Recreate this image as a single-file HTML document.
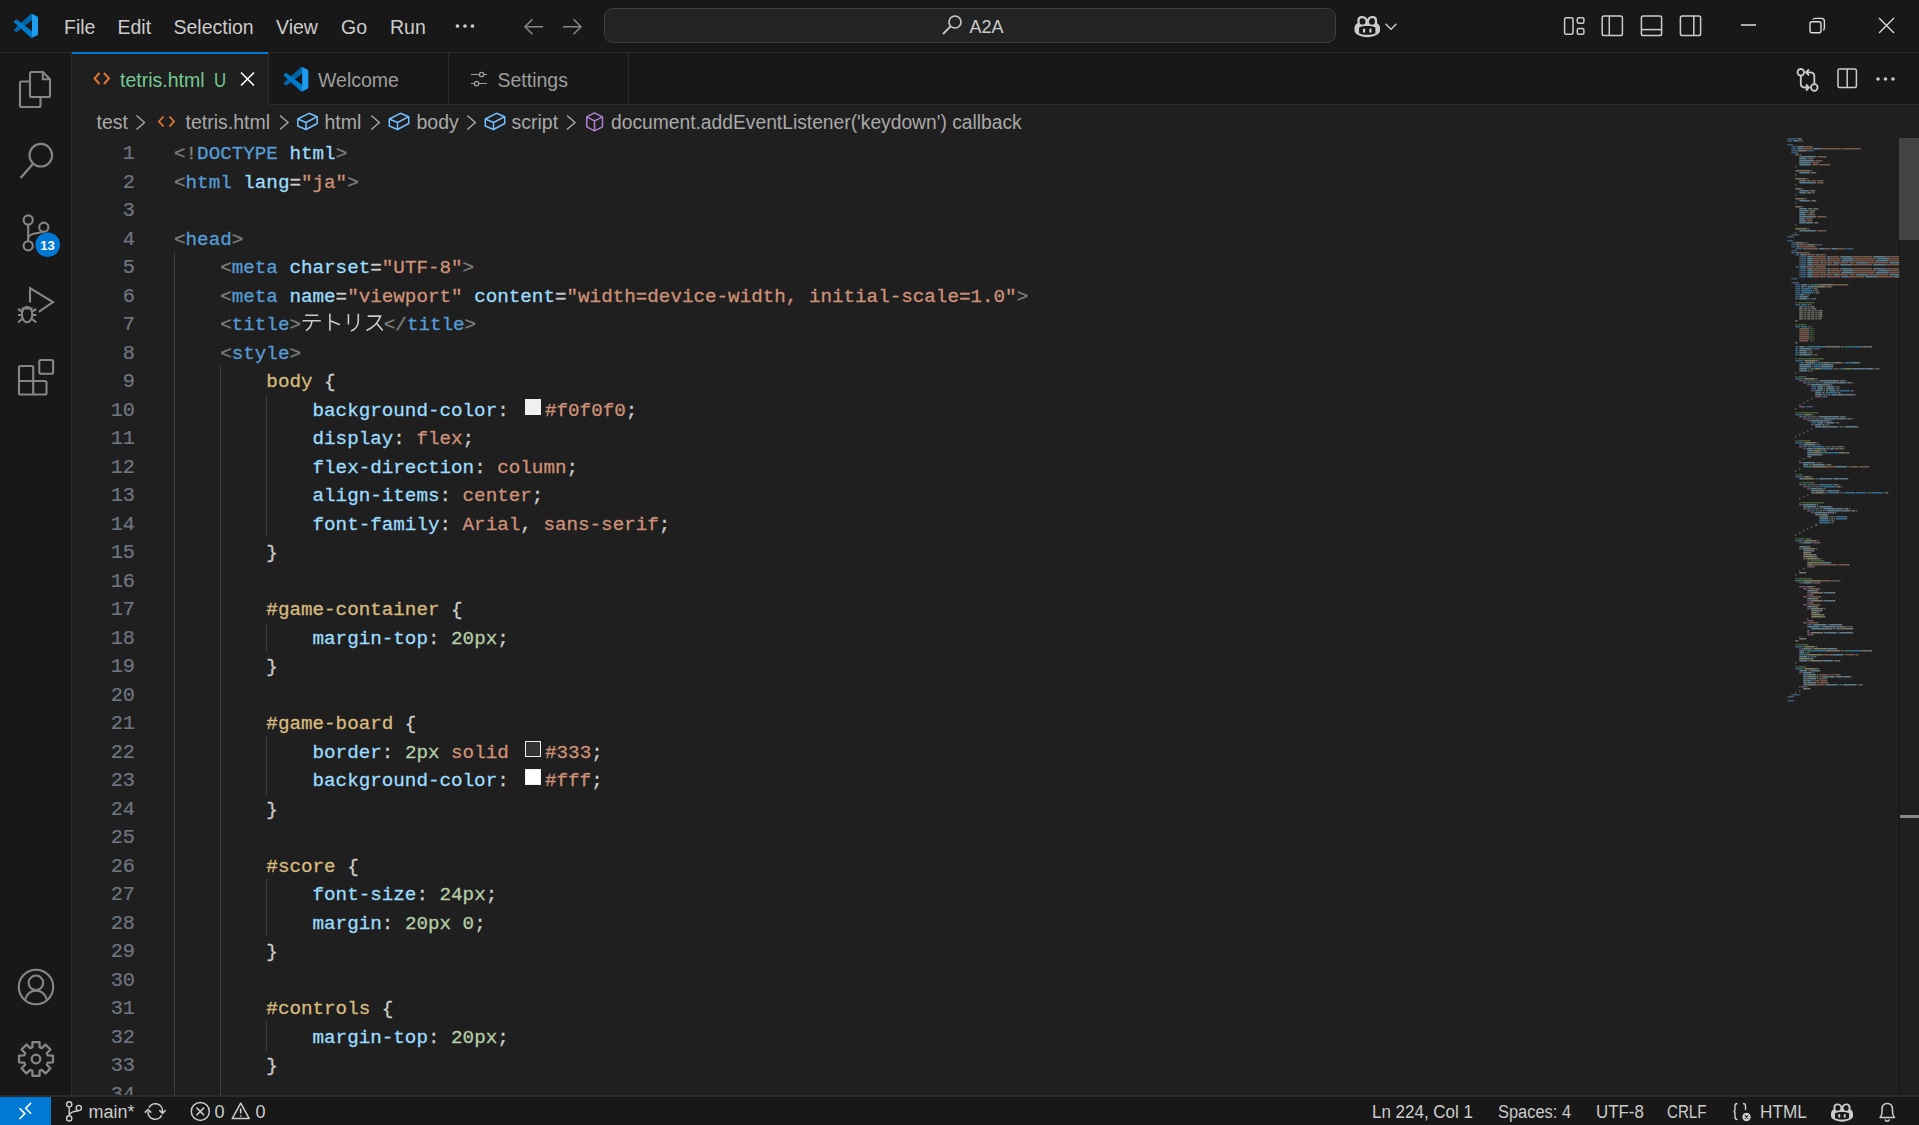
<!DOCTYPE html>
<html><head><meta charset="utf-8"><style>
html,body{margin:0;padding:0;width:1919px;height:1125px;overflow:hidden;background:#181818}
.r{position:absolute}
.t{position:absolute;white-space:pre;line-height:1;font-family:"Liberation Sans", sans-serif}
.ln{position:absolute;left:0;width:63px;text-align:right;font-family:"Liberation Mono", monospace;font-size:20.3px;line-height:1;margin-top:-0.8px;color:#6e7681;-webkit-text-stroke:0.2px currentColor}
.code{position:absolute;white-space:pre;font-family:"Liberation Mono", monospace;font-size:19.24px;line-height:1;color:#cccccc;-webkit-text-stroke:0.3px currentColor}
.jp{display:inline-block;width:82.8px;height:1px}
.sw{display:inline-block;box-sizing:border-box;width:16.2px;height:16.2px;margin:0 4.2px 0 4.3px;border:1.6px solid #eeeeee;vertical-align:top;position:relative;top:-2.9px}
</style></head><body>
<div class="r" style="left:0px;top:0px;width:1919px;height:1125px;background:#181818;"></div><div class="r" style="left:72px;top:104px;width:1847px;height:991px;background:#1f1f1f;"></div><div class="r" style="left:0px;top:52px;width:1919px;height:1px;background:#2b2b2b;"></div><div class="r" style="left:71px;top:53px;width:1px;height:1042px;background:#2b2b2b;"></div><div class="r" style="left:72px;top:104px;width:1847px;height:1px;background:#2b2b2b;"></div><div class="r" style="left:72px;top:53px;width:196px;height:52px;background:#1f1f1f;"></div><div class="r" style="left:72px;top:52px;width:196px;height:2px;background:#0078d4;"></div><div class="r" style="left:268px;top:53px;width:1px;height:51px;background:#2b2b2b;"></div><div class="r" style="left:448px;top:53px;width:1px;height:51px;background:#2b2b2b;"></div><div class="r" style="left:628px;top:53px;width:1px;height:51px;background:#2b2b2b;"></div><div class="r" style="left:0px;top:1095px;width:1919px;height:2px;background:#2b2b2b;"></div><div class="r" style="left:0px;top:1097px;width:51px;height:28px;background:#0078d4;"></div><div class="t" style="left:64.00px;top:17.69px;font-size:19.5px;color:#cccccc;">File</div><div class="t" style="left:117.50px;top:17.69px;font-size:19.5px;color:#cccccc;">Edit</div><div class="t" style="left:173.50px;top:17.69px;font-size:19.5px;color:#cccccc;">Selection</div><div class="t" style="left:276.00px;top:17.69px;font-size:19.5px;color:#cccccc;">View</div><div class="t" style="left:341.00px;top:17.69px;font-size:19.5px;color:#cccccc;">Go</div><div class="t" style="left:390.00px;top:17.69px;font-size:19.5px;color:#cccccc;">Run</div><div class="r" style="left:604px;top:8px;width:730px;height:33px;background:#232323;border:1px solid #3e3e3e;border-radius:9px"></div><div class="t" style="left:969.50px;top:17.96px;font-size:18px;color:#cccccc;">A2A</div><div class="t" style="left:120.00px;top:71.39px;font-size:19.5px;color:#73c991;">tetris.html</div><div class="t" style="left:214.00px;top:71.39px;font-size:19.5px;color:#73c991;transform:scaleX(0.86);transform-origin:0 0;">U</div><div class="t" style="left:318.00px;top:71.39px;font-size:19.5px;color:#9d9d9d;">Welcome</div><div class="t" style="left:497.50px;top:71.39px;font-size:19.5px;color:#9d9d9d;">Settings</div><div class="t" style="left:96.50px;top:113.39px;font-size:19.5px;color:#a9a9a9;">test</div><div class="t" style="left:185.50px;top:113.39px;font-size:19.5px;color:#a9a9a9;">tetris.html</div><div class="t" style="left:324.50px;top:113.39px;font-size:19.5px;color:#a9a9a9;">html</div><div class="t" style="left:416.50px;top:113.39px;font-size:19.5px;color:#a9a9a9;">body</div><div class="t" style="left:511.50px;top:113.39px;font-size:19.5px;color:#a9a9a9;">script</div><div class="t" style="left:611.00px;top:113.39px;font-size:19.5px;color:#a9a9a9;transform:scaleX(0.987);transform-origin:0 0;">document.addEventListener('keydown') callback</div><div class="t" style="left:88.50px;top:1103.36px;font-size:18px;color:#cccccc;">main*</div><div class="t" style="left:214.50px;top:1103.36px;font-size:18px;color:#cccccc;">0</div><div class="t" style="left:255.50px;top:1103.36px;font-size:18px;color:#cccccc;">0</div><div class="t" style="left:1372.00px;top:1103.36px;font-size:18px;color:#cccccc;transform:scaleX(0.943);transform-origin:0 0;">Ln 224, Col 1</div><div class="t" style="left:1497.50px;top:1103.36px;font-size:18px;color:#cccccc;transform:scaleX(0.9125);transform-origin:0 0;">Spaces: 4</div><div class="t" style="left:1595.50px;top:1103.36px;font-size:18px;color:#cccccc;transform:scaleX(0.938);transform-origin:0 0;">UTF-8</div><div class="t" style="left:1666.50px;top:1103.36px;font-size:18px;color:#cccccc;transform:scaleX(0.839);transform-origin:0 0;">CRLF</div><div class="t" style="left:1760.00px;top:1103.36px;font-size:18px;color:#cccccc;transform:scaleX(0.954);transform-origin:0 0;">HTML</div><div class="r" style="left:1899px;top:138px;width:1px;height:957px;background:#131313;"></div><div class="r" style="left:1899px;top:138px;width:20px;height:102px;background:#434343;"></div><div class="r" style="left:1900px;top:815px;width:19px;height:3px;background:#8a8a8a;"></div><div style="position:absolute;left:72px;top:138px;width:1716px;height:957px;overflow:hidden"><div class="ln" style="top:7.15px">1</div><div class="code" style="top:7.15px;left:102.0px"><span style="color:#808080">&lt;!</span><span style="color:#569cd6">DOCTYPE</span><span style="color:#cccccc"> </span><span style="color:#9cdcfe">html</span><span style="color:#808080">&gt;</span></div><div class="ln" style="top:35.65px">2</div><div class="code" style="top:35.65px;left:102.0px"><span style="color:#808080">&lt;</span><span style="color:#569cd6">html</span> <span style="color:#9cdcfe">lang</span><span style="color:#cccccc">=</span><span style="color:#ce9178">&quot;ja&quot;</span><span style="color:#808080">&gt;</span></div><div class="ln" style="top:64.15px">3</div><div class="code" style="top:64.15px;left:102.0px"></div><div class="ln" style="top:92.65px">4</div><div class="code" style="top:92.65px;left:102.0px"><span style="color:#808080">&lt;</span><span style="color:#569cd6">head</span><span style="color:#808080">&gt;</span></div><div class="ln" style="top:121.15px">5</div><div class="r" style="left:102.0px;top:114.00px;width:1px;height:28.7px;background:#404040"></div><div class="code" style="top:121.15px;left:102.0px">    <span style="color:#808080">&lt;</span><span style="color:#569cd6">meta</span> <span style="color:#9cdcfe">charset</span><span style="color:#cccccc">=</span><span style="color:#ce9178">&quot;UTF-8&quot;</span><span style="color:#808080">&gt;</span></div><div class="ln" style="top:149.65px">6</div><div class="r" style="left:102.0px;top:142.50px;width:1px;height:28.7px;background:#404040"></div><div class="code" style="top:149.65px;left:102.0px">    <span style="color:#808080">&lt;</span><span style="color:#569cd6">meta</span> <span style="color:#9cdcfe">name</span><span style="color:#cccccc">=</span><span style="color:#ce9178">&quot;viewport&quot;</span> <span style="color:#9cdcfe">content</span><span style="color:#cccccc">=</span><span style="color:#ce9178">&quot;width=device-width, initial-scale=1.0&quot;</span><span style="color:#808080">&gt;</span></div><div class="ln" style="top:178.15px">7</div><div class="r" style="left:102.0px;top:171.00px;width:1px;height:28.7px;background:#404040"></div><div class="code" style="top:178.15px;left:102.0px">    <span style="color:#808080">&lt;</span><span style="color:#569cd6">title</span><span style="color:#808080">&gt;</span><span class="jp"></span><span style="color:#808080">&lt;/</span><span style="color:#569cd6">title</span><span style="color:#808080">&gt;</span></div><div class="ln" style="top:206.65px">8</div><div class="r" style="left:102.0px;top:199.50px;width:1px;height:28.7px;background:#404040"></div><div class="code" style="top:206.65px;left:102.0px">    <span style="color:#808080">&lt;</span><span style="color:#569cd6">style</span><span style="color:#808080">&gt;</span></div><div class="ln" style="top:235.15px">9</div><div class="r" style="left:102.0px;top:228.00px;width:1px;height:28.7px;background:#404040"></div><div class="r" style="left:148.2px;top:228.00px;width:1px;height:28.7px;background:#404040"></div><div class="code" style="top:235.15px;left:102.0px">        <span style="color:#d7ba7d">body</span><span style="color:#cccccc"> {</span></div><div class="ln" style="top:263.65px">10</div><div class="r" style="left:102.0px;top:256.50px;width:1px;height:28.7px;background:#404040"></div><div class="r" style="left:148.2px;top:256.50px;width:1px;height:28.7px;background:#404040"></div><div class="r" style="left:194.4px;top:256.50px;width:1px;height:28.7px;background:#404040"></div><div class="code" style="top:263.65px;left:102.0px">            <span style="color:#9cdcfe">background-color</span><span style="color:#cccccc">: </span><span class="sw" style="background:#f0f0f0"></span><span style="color:#ce9178">#f0f0f0</span><span style="color:#cccccc">;</span></div><div class="ln" style="top:292.15px">11</div><div class="r" style="left:102.0px;top:285.00px;width:1px;height:28.7px;background:#404040"></div><div class="r" style="left:148.2px;top:285.00px;width:1px;height:28.7px;background:#404040"></div><div class="r" style="left:194.4px;top:285.00px;width:1px;height:28.7px;background:#404040"></div><div class="code" style="top:292.15px;left:102.0px">            <span style="color:#9cdcfe">display</span><span style="color:#cccccc">: </span><span style="color:#ce9178">flex</span><span style="color:#cccccc">;</span></div><div class="ln" style="top:320.65px">12</div><div class="r" style="left:102.0px;top:313.50px;width:1px;height:28.7px;background:#404040"></div><div class="r" style="left:148.2px;top:313.50px;width:1px;height:28.7px;background:#404040"></div><div class="r" style="left:194.4px;top:313.50px;width:1px;height:28.7px;background:#404040"></div><div class="code" style="top:320.65px;left:102.0px">            <span style="color:#9cdcfe">flex-direction</span><span style="color:#cccccc">: </span><span style="color:#ce9178">column</span><span style="color:#cccccc">;</span></div><div class="ln" style="top:349.15px">13</div><div class="r" style="left:102.0px;top:342.00px;width:1px;height:28.7px;background:#404040"></div><div class="r" style="left:148.2px;top:342.00px;width:1px;height:28.7px;background:#404040"></div><div class="r" style="left:194.4px;top:342.00px;width:1px;height:28.7px;background:#404040"></div><div class="code" style="top:349.15px;left:102.0px">            <span style="color:#9cdcfe">align-items</span><span style="color:#cccccc">: </span><span style="color:#ce9178">center</span><span style="color:#cccccc">;</span></div><div class="ln" style="top:377.65px">14</div><div class="r" style="left:102.0px;top:370.50px;width:1px;height:28.7px;background:#404040"></div><div class="r" style="left:148.2px;top:370.50px;width:1px;height:28.7px;background:#404040"></div><div class="r" style="left:194.4px;top:370.50px;width:1px;height:28.7px;background:#404040"></div><div class="code" style="top:377.65px;left:102.0px">            <span style="color:#9cdcfe">font-family</span><span style="color:#cccccc">: </span><span style="color:#ce9178">Arial</span><span style="color:#cccccc">, </span><span style="color:#ce9178">sans-serif</span><span style="color:#cccccc">;</span></div><div class="ln" style="top:406.15px">15</div><div class="r" style="left:102.0px;top:399.00px;width:1px;height:28.7px;background:#404040"></div><div class="r" style="left:148.2px;top:399.00px;width:1px;height:28.7px;background:#404040"></div><div class="code" style="top:406.15px;left:102.0px">        <span style="color:#cccccc">}</span></div><div class="ln" style="top:434.65px">16</div><div class="r" style="left:102.0px;top:427.50px;width:1px;height:28.7px;background:#404040"></div><div class="r" style="left:148.2px;top:427.50px;width:1px;height:28.7px;background:#404040"></div><div class="code" style="top:434.65px;left:102.0px"></div><div class="ln" style="top:463.15px">17</div><div class="r" style="left:102.0px;top:456.00px;width:1px;height:28.7px;background:#404040"></div><div class="r" style="left:148.2px;top:456.00px;width:1px;height:28.7px;background:#404040"></div><div class="code" style="top:463.15px;left:102.0px">        <span style="color:#d7ba7d">#game-container</span><span style="color:#cccccc"> {</span></div><div class="ln" style="top:491.65px">18</div><div class="r" style="left:102.0px;top:484.50px;width:1px;height:28.7px;background:#404040"></div><div class="r" style="left:148.2px;top:484.50px;width:1px;height:28.7px;background:#404040"></div><div class="r" style="left:194.4px;top:484.50px;width:1px;height:28.7px;background:#404040"></div><div class="code" style="top:491.65px;left:102.0px">            <span style="color:#9cdcfe">margin-top</span><span style="color:#cccccc">: </span><span style="color:#b5cea8">20px</span><span style="color:#cccccc">;</span></div><div class="ln" style="top:520.15px">19</div><div class="r" style="left:102.0px;top:513.00px;width:1px;height:28.7px;background:#404040"></div><div class="r" style="left:148.2px;top:513.00px;width:1px;height:28.7px;background:#404040"></div><div class="code" style="top:520.15px;left:102.0px">        <span style="color:#cccccc">}</span></div><div class="ln" style="top:548.65px">20</div><div class="r" style="left:102.0px;top:541.50px;width:1px;height:28.7px;background:#404040"></div><div class="r" style="left:148.2px;top:541.50px;width:1px;height:28.7px;background:#404040"></div><div class="code" style="top:548.65px;left:102.0px"></div><div class="ln" style="top:577.15px">21</div><div class="r" style="left:102.0px;top:570.00px;width:1px;height:28.7px;background:#404040"></div><div class="r" style="left:148.2px;top:570.00px;width:1px;height:28.7px;background:#404040"></div><div class="code" style="top:577.15px;left:102.0px">        <span style="color:#d7ba7d">#game-board</span><span style="color:#cccccc"> {</span></div><div class="ln" style="top:605.65px">22</div><div class="r" style="left:102.0px;top:598.50px;width:1px;height:28.7px;background:#404040"></div><div class="r" style="left:148.2px;top:598.50px;width:1px;height:28.7px;background:#404040"></div><div class="r" style="left:194.4px;top:598.50px;width:1px;height:28.7px;background:#404040"></div><div class="code" style="top:605.65px;left:102.0px">            <span style="color:#9cdcfe">border</span><span style="color:#cccccc">: </span><span style="color:#b5cea8">2px</span> <span style="color:#ce9178">solid</span> <span class="sw" style="background:#333333"></span><span style="color:#ce9178">#333</span><span style="color:#cccccc">;</span></div><div class="ln" style="top:634.15px">23</div><div class="r" style="left:102.0px;top:627.00px;width:1px;height:28.7px;background:#404040"></div><div class="r" style="left:148.2px;top:627.00px;width:1px;height:28.7px;background:#404040"></div><div class="r" style="left:194.4px;top:627.00px;width:1px;height:28.7px;background:#404040"></div><div class="code" style="top:634.15px;left:102.0px">            <span style="color:#9cdcfe">background-color</span><span style="color:#cccccc">: </span><span class="sw" style="background:#ffffff"></span><span style="color:#ce9178">#fff</span><span style="color:#cccccc">;</span></div><div class="ln" style="top:662.65px">24</div><div class="r" style="left:102.0px;top:655.50px;width:1px;height:28.7px;background:#404040"></div><div class="r" style="left:148.2px;top:655.50px;width:1px;height:28.7px;background:#404040"></div><div class="code" style="top:662.65px;left:102.0px">        <span style="color:#cccccc">}</span></div><div class="ln" style="top:691.15px">25</div><div class="r" style="left:102.0px;top:684.00px;width:1px;height:28.7px;background:#404040"></div><div class="r" style="left:148.2px;top:684.00px;width:1px;height:28.7px;background:#404040"></div><div class="code" style="top:691.15px;left:102.0px"></div><div class="ln" style="top:719.65px">26</div><div class="r" style="left:102.0px;top:712.50px;width:1px;height:28.7px;background:#404040"></div><div class="r" style="left:148.2px;top:712.50px;width:1px;height:28.7px;background:#404040"></div><div class="code" style="top:719.65px;left:102.0px">        <span style="color:#d7ba7d">#score</span><span style="color:#cccccc"> {</span></div><div class="ln" style="top:748.15px">27</div><div class="r" style="left:102.0px;top:741.00px;width:1px;height:28.7px;background:#404040"></div><div class="r" style="left:148.2px;top:741.00px;width:1px;height:28.7px;background:#404040"></div><div class="r" style="left:194.4px;top:741.00px;width:1px;height:28.7px;background:#404040"></div><div class="code" style="top:748.15px;left:102.0px">            <span style="color:#9cdcfe">font-size</span><span style="color:#cccccc">: </span><span style="color:#b5cea8">24px</span><span style="color:#cccccc">;</span></div><div class="ln" style="top:776.65px">28</div><div class="r" style="left:102.0px;top:769.50px;width:1px;height:28.7px;background:#404040"></div><div class="r" style="left:148.2px;top:769.50px;width:1px;height:28.7px;background:#404040"></div><div class="r" style="left:194.4px;top:769.50px;width:1px;height:28.7px;background:#404040"></div><div class="code" style="top:776.65px;left:102.0px">            <span style="color:#9cdcfe">margin</span><span style="color:#cccccc">: </span><span style="color:#b5cea8">20px</span> <span style="color:#b5cea8">0</span><span style="color:#cccccc">;</span></div><div class="ln" style="top:805.15px">29</div><div class="r" style="left:102.0px;top:798.00px;width:1px;height:28.7px;background:#404040"></div><div class="r" style="left:148.2px;top:798.00px;width:1px;height:28.7px;background:#404040"></div><div class="code" style="top:805.15px;left:102.0px">        <span style="color:#cccccc">}</span></div><div class="ln" style="top:833.65px">30</div><div class="r" style="left:102.0px;top:826.50px;width:1px;height:28.7px;background:#404040"></div><div class="r" style="left:148.2px;top:826.50px;width:1px;height:28.7px;background:#404040"></div><div class="code" style="top:833.65px;left:102.0px"></div><div class="ln" style="top:862.15px">31</div><div class="r" style="left:102.0px;top:855.00px;width:1px;height:28.7px;background:#404040"></div><div class="r" style="left:148.2px;top:855.00px;width:1px;height:28.7px;background:#404040"></div><div class="code" style="top:862.15px;left:102.0px">        <span style="color:#d7ba7d">#controls</span><span style="color:#cccccc"> {</span></div><div class="ln" style="top:890.65px">32</div><div class="r" style="left:102.0px;top:883.50px;width:1px;height:28.7px;background:#404040"></div><div class="r" style="left:148.2px;top:883.50px;width:1px;height:28.7px;background:#404040"></div><div class="r" style="left:194.4px;top:883.50px;width:1px;height:28.7px;background:#404040"></div><div class="code" style="top:890.65px;left:102.0px">            <span style="color:#9cdcfe">margin-top</span><span style="color:#cccccc">: </span><span style="color:#b5cea8">20px</span><span style="color:#cccccc">;</span></div><div class="ln" style="top:919.15px">33</div><div class="r" style="left:102.0px;top:912.00px;width:1px;height:28.7px;background:#404040"></div><div class="r" style="left:148.2px;top:912.00px;width:1px;height:28.7px;background:#404040"></div><div class="code" style="top:919.15px;left:102.0px">        <span style="color:#cccccc">}</span></div><div class="ln" style="top:947.65px">34</div><div class="r" style="left:102.0px;top:940.50px;width:1px;height:28.7px;background:#404040"></div><div class="r" style="left:148.2px;top:940.50px;width:1px;height:28.7px;background:#404040"></div><div class="code" style="top:947.65px;left:102.0px"></div></div>
<svg style="position:absolute;left:0;top:0" width="1919" height="1125"><g transform="translate(14,13.8) scale(0.24)">
<path fill="#0065A9" d="M96.46 10.8 75.86.87a6.23 6.23 0 0 0-7.1 1.2L1.33 63.58a4.17 4.17 0 0 0 0 6.16l5.51 5.01a4.16 4.16 0 0 0 5.32.24L93.38 13.6A4.17 4.17 0 0 1 100 16.9v-.48a6.24 6.24 0 0 0-3.54-5.62z"/>
<path fill="#007ACC" d="M96.46 89.2 75.86 99.13a6.23 6.23 0 0 1-7.1-1.2L1.33 36.42a4.17 4.17 0 0 1 0-6.16l5.51-5.01a4.16 4.16 0 0 1 5.32-.24L93.38 86.4A4.17 4.17 0 0 0 100 83.1v.48a6.24 6.24 0 0 1-3.54 5.62z"/>
<path fill="#1F9CF0" d="M75.86 99.13a6.23 6.23 0 0 1-7.1-1.2c2.3 2.3 6.24.67 6.24-2.59V4.66c0-3.26-3.94-4.89-6.24-2.59a6.23 6.23 0 0 1 7.1-1.2l20.6 9.91A6.24 6.24 0 0 1 100 16.42v67.16a6.24 6.24 0 0 1-3.54 5.62z"/>
</g><circle cx="457.5" cy="26" r="1.85" fill="#cccccc"/><circle cx="465" cy="26" r="1.85" fill="#cccccc"/><circle cx="472.5" cy="26" r="1.85" fill="#cccccc"/><path d="M543 26.8H525 M532.5 19.3 525 26.8 532.5 34.3" stroke="#868686" stroke-width="1.6" fill="none"/><path d="M563 26.8H581 M573.5 19.3 581 26.8 573.5 34.3" stroke="#868686" stroke-width="1.6" fill="none"/><circle cx="955" cy="22" r="6" stroke="#cccccc" stroke-width="1.6" fill="none"/><path d="M950.8 26.2 943 34" stroke="#cccccc" stroke-width="1.8" fill="none"/><g transform="translate(1354.5,15) scale(1.02)">
<path fill="#cccccc" d="M12.5 4.2C11.3 1.5 9 0.8 6.6 1.1 3.9 1.5 2.6 3.2 2.8 6.3L2.9 8C1.3 8.7 0 10.3 0 12.8V15.7C0 18.3 5.5 21.8 12.5 21.8S25 18.3 25 15.7V12.8C25 10.3 23.7 8.7 22.1 8L22.2 6.3C22.4 3.2 21.1 1.5 18.4 1.1 16 0.8 13.7 1.5 12.5 4.2Z"/>
<path fill="#181818" d="M5.2 4.6C5.5 3.3 6.6 3 8 3.1 9.7 3.3 10.8 4.3 10.8 6.3 10.8 8.4 9.6 9.4 7.8 9.4 5.9 9.4 5 8.5 5 6.5Z M19.8 4.6C19.5 3.3 18.4 3 17 3.1 15.3 3.3 14.2 4.3 14.2 6.3 14.2 8.4 15.4 9.4 17.2 9.4 19.1 9.4 20 8.5 20 6.5Z"/>
<path fill="#181818" d="M4.5 12.2C6.5 11.2 9.5 10.8 12.5 10.8S18.5 11.2 20.5 12.2V17.8C18.5 18.8 15.5 19.3 12.5 19.3S6.5 18.8 4.5 17.8Z"/>
<rect x="8.3" y="13.2" width="2.2" height="4.2" rx="1.1" fill="#cccccc"/>
<rect x="14.5" y="13.2" width="2.2" height="4.2" rx="1.1" fill="#cccccc"/>
</g><path d="M1385.5 23.7 1391 29.2 1396.5 23.7" stroke="#cccccc" stroke-width="1.4" fill="none"/><rect x="1564.6" y="17.7" width="8.4" height="16.6" rx="1.5" stroke="#cccccc" stroke-width="1.5" fill="none"/><rect x="1577.3" y="17.7" width="6.6" height="5.6" rx="1.5" stroke="#cccccc" stroke-width="1.5" fill="none"/><rect x="1577.3" y="28.6" width="6.6" height="5.6" rx="1.5" stroke="#cccccc" stroke-width="1.5" fill="none"/><rect x="1602.2" y="16.1" width="20.2" height="19.4" rx="1.8" stroke="#cccccc" stroke-width="1.5" fill="none"/><rect x="1641.4" y="16.1" width="20.2" height="19.4" rx="1.8" stroke="#cccccc" stroke-width="1.5" fill="none"/><rect x="1680.4" y="16.1" width="20.2" height="19.4" rx="1.8" stroke="#cccccc" stroke-width="1.5" fill="none"/><path d="M1609.3 16.1V35.5" stroke="#cccccc" stroke-width="1.5"/><path d="M1641.4 29.6H1661.6" stroke="#cccccc" stroke-width="1.5"/><path d="M1693.8 16.1V35.5" stroke="#cccccc" stroke-width="1.5"/><path d="M1741 25H1756" stroke="#dcdcdc" stroke-width="1.5"/><rect x="1810" y="21.8" width="11" height="11" rx="2" stroke="#dcdcdc" stroke-width="1.4" fill="none"/><path d="M1813 19.5Q1813.5 18.4 1815.5 18.4H1821.5Q1824.4 18.4 1824.4 21.3V27.5Q1824.4 29.6 1823.2 30" stroke="#dcdcdc" stroke-width="1.4" fill="none"/><path d="M1879 18 1894 33 M1894 18 1879 33" stroke="#dcdcdc" stroke-width="1.4"/><path d="M305.2 315.3H318.2 M302.6 320.7H320.8 M311.9 320.9Q311.6 327.5 306 330.6 M329.9 313.8V330.8 M330.8 321 339.8 324.8 M348.4 314V324.6 M358.3 313.8V320.5Q358.3 328.3 351 331 M367.7 316.1H380.6Q377 326.3 366.4 330.5 M376.3 322.8 382.7 330.4" stroke="#cccccc" stroke-width="1.6" fill="none"/><path d="M40.5 97.8V105.5Q40.5 107 39 107H21.5Q20 107 20 105.5V83Q20 81.5 21.5 81.5H29.5" stroke="#868686" stroke-width="2.1" fill="none"/><path d="M31.5 72H42.8L50 79.2V95.5Q50 97 48.5 97H31.5Q30 97 30 95.5V73.5Q30 72 31.5 72Z" stroke="#868686" stroke-width="2.1" fill="none" stroke-linejoin="round"/><path d="M42.8 72V79.2H50" stroke="#868686" stroke-width="2.1" fill="none"/><circle cx="40.8" cy="155.2" r="11.3" stroke="#868686" stroke-width="2.1" fill="none"/><path d="M33.3 163.6 20.5 178" stroke="#868686" stroke-width="2.3" fill="none"/><circle cx="28.2" cy="220" r="4.6" stroke="#868686" stroke-width="2.1" fill="none"/><circle cx="43.8" cy="227.2" r="4.6" stroke="#868686" stroke-width="2.1" fill="none"/><circle cx="28.2" cy="245.8" r="4.6" stroke="#868686" stroke-width="2.1" fill="none"/><path d="M28.2 224.6V241.2 M28.2 238Q29 234.5 35 233.5Q41 232.5 42.5 231.6" stroke="#868686" stroke-width="2.1" fill="none"/><circle cx="47.7" cy="244.8" r="12.3" fill="#0078d4"/><text x="47.5" y="249.6" font-family="Liberation Sans" font-weight="bold" font-size="13" fill="#ffffff" text-anchor="middle">13</text><path d="M30 302.5V288L53 302 38.8 311.8" stroke="#868686" stroke-width="2.1" fill="none" stroke-linejoin="miter"/><ellipse cx="27.1" cy="314.5" rx="5.2" ry="7.8" stroke="#868686" stroke-width="2.1" fill="none"/><path d="M18 309 22 311.5 M36.3 309 32.2 311.5 M18 315H22 M36.3 315H32.2 M18 322.5 22 319 M36.3 322.5 32.2 319 M21.5 308.5H32.7" stroke="#868686" stroke-width="2.1" fill="none"/><path d="M19 381H33.2V367.5Q33.2 366 31.7 366H20.5Q19 366 19 367.5V393Q19 394.5 20.5 394.5H45Q46.5 394.5 46.5 393V382.5Q46.5 381 45 381H33.2V394.5" stroke="#868686" stroke-width="2.1" fill="none"/><rect x="39.3" y="360" width="13.8" height="13.8" rx="1.5" stroke="#868686" stroke-width="2.1" fill="none"/><circle cx="36" cy="987" r="17.2" stroke="#868686" stroke-width="2.1" fill="none"/><circle cx="35.9" cy="982.8" r="7.3" stroke="#868686" stroke-width="2.1" fill="none"/><path d="M25 999.8Q28 990.6 36 990.6Q44 990.6 47 999.8" stroke="#868686" stroke-width="2.1" fill="none"/><path d="M52.96 1055.56 L52.96 1062.44 L47.75 1062.63 L46.88 1064.74 L50.42 1068.56 L45.56 1073.42 L41.74 1069.88 L39.63 1070.75 L39.44 1075.96 L32.56 1075.96 L32.37 1070.75 L30.26 1069.88 L26.44 1073.42 L21.58 1068.56 L25.12 1064.74 L24.25 1062.63 L19.04 1062.44 L19.04 1055.56 L24.25 1055.37 L25.12 1053.26 L21.58 1049.44 L26.44 1044.58 L30.26 1048.12 L32.37 1047.25 L32.56 1042.04 L39.44 1042.04 L39.63 1047.25 L41.74 1048.12 L45.56 1044.58 L50.42 1049.44 L46.88 1053.26 L47.75 1055.37Z" stroke="#868686" stroke-width="2.3" fill="none" stroke-linejoin="round"/><circle cx="36" cy="1059" r="4.3" stroke="#868686" stroke-width="2.3" fill="none"/><path d="M99.5 73 94.5 78.5 99.5 84 M104 73 109 78.5 104 84" stroke="#e37933" stroke-width="1.9" fill="none"/><path d="M241 72.5 254 85.5 M254 72.5 241 85.5" stroke="#ffffff" stroke-width="1.6"/><g transform="translate(283.8,67) scale(0.245)">
<path fill="#0065A9" d="M96.46 10.8 75.86.87a6.23 6.23 0 0 0-7.1 1.2L1.33 63.58a4.17 4.17 0 0 0 0 6.16l5.51 5.01a4.16 4.16 0 0 0 5.32.24L93.38 13.6A4.17 4.17 0 0 1 100 16.9v-.48a6.24 6.24 0 0 0-3.54-5.62z"/>
<path fill="#007ACC" d="M96.46 89.2 75.86 99.13a6.23 6.23 0 0 1-7.1-1.2L1.33 36.42a4.17 4.17 0 0 1 0-6.16l5.51-5.01a4.16 4.16 0 0 1 5.32-.24L93.38 86.4A4.17 4.17 0 0 0 100 83.1v.48a6.24 6.24 0 0 1-3.54 5.62z"/>
<path fill="#1F9CF0" d="M75.86 99.13a6.23 6.23 0 0 1-7.1-1.2c2.3 2.3 6.24.67 6.24-2.59V4.66c0-3.26-3.94-4.89-6.24-2.59a6.23 6.23 0 0 1 7.1-1.2l20.6 9.91A6.24 6.24 0 0 1 100 16.42v67.16a6.24 6.24 0 0 1-3.54 5.62z"/>
</g><path d="M471 74.5H487 M471 83.5H487" stroke="#9d9d9d" stroke-width="1.2"/><circle cx="481.6" cy="74.5" r="2.2" fill="#181818" stroke="#9d9d9d" stroke-width="1.3"/><circle cx="476.6" cy="83.5" r="2.2" fill="#181818" stroke="#9d9d9d" stroke-width="1.3"/><circle cx="1800.8" cy="72.3" r="3.3" stroke="#cccccc" stroke-width="1.8" fill="none"/><circle cx="1814.3" cy="87.5" r="3.3" stroke="#cccccc" stroke-width="1.8" fill="none"/><path d="M1800.8 75.6V83.5Q1800.8 87.5 1804.8 87.5H1808 M1806 84.5 1809 87.5 1806 90.5" stroke="#cccccc" stroke-width="1.8" fill="none"/><path d="M1814.3 84.2V76Q1814.3 72.3 1810.3 72.3H1807 M1809 69.3 1806 72.3 1809 75.3" stroke="#cccccc" stroke-width="1.8" fill="none"/><rect x="1838" y="69" width="18.4" height="18.6" rx="1.5" stroke="#cccccc" stroke-width="1.5" fill="none"/><path d="M1847.2 69V87.6" stroke="#cccccc" stroke-width="1.5"/><circle cx="1878" cy="79" r="1.8" fill="#cccccc"/><circle cx="1885.5" cy="79" r="1.8" fill="#cccccc"/><circle cx="1893" cy="79" r="1.8" fill="#cccccc"/><path d="M136.5 115.5 144.5 122.5 136.5 129.5" stroke="#a9a9a9" stroke-width="1.4" fill="none"/><path d="M280 115.5 288 122.5 280 129.5" stroke="#a9a9a9" stroke-width="1.4" fill="none"/><path d="M371.3 115.5 379.3 122.5 371.3 129.5" stroke="#a9a9a9" stroke-width="1.4" fill="none"/><path d="M467.3 115.5 475.3 122.5 467.3 129.5" stroke="#a9a9a9" stroke-width="1.4" fill="none"/><path d="M567 115.5 575 122.5 567 129.5" stroke="#a9a9a9" stroke-width="1.4" fill="none"/><path d="M163.5 116.5 159 121.5 163.5 126.5 M169.5 116.5 174 121.5 169.5 126.5" stroke="#e37933" stroke-width="1.8" fill="none"/><g transform="translate(297,112.5)" stroke="#75beff" stroke-width="1.5" fill="none" stroke-linejoin="round">
<path d="M0.8 6.5 12 0.8 20.2 4.2V11L9 17 0.8 13.5Z"/>
<path d="M0.8 6.5 9 10V17 M9 10 20.2 4.2"/>
</g><g transform="translate(388.5,112.5)" stroke="#75beff" stroke-width="1.5" fill="none" stroke-linejoin="round">
<path d="M0.8 6.5 12 0.8 20.2 4.2V11L9 17 0.8 13.5Z"/>
<path d="M0.8 6.5 9 10V17 M9 10 20.2 4.2"/>
</g><g transform="translate(484.5,112.5)" stroke="#75beff" stroke-width="1.5" fill="none" stroke-linejoin="round">
<path d="M0.8 6.5 12 0.8 20.2 4.2V11L9 17 0.8 13.5Z"/>
<path d="M0.8 6.5 9 10V17 M9 10 20.2 4.2"/>
</g><g transform="translate(586,112)" stroke="#b180d7" stroke-width="1.5" fill="none" stroke-linejoin="round">
<path d="M8.5 0.8 16.5 4.8V14.8L8.5 18.8 0.8 14.8V4.8Z"/>
<path d="M0.8 4.8 8.5 8.8 16.5 4.8 M8.5 8.8V18.8"/>
</g><path d="M19.5 1108.2 24.9 1113.6 19.5 1119 M31.1 1102.9 25.7 1108.3 31.1 1113.7" stroke="#ffffff" stroke-width="1.6" fill="none"/><circle cx="69.2" cy="1104.3" r="2.6" stroke="#cccccc" stroke-width="1.4" fill="none"/><circle cx="69.2" cy="1118.4" r="2.6" stroke="#cccccc" stroke-width="1.4" fill="none"/><circle cx="78.8" cy="1108" r="2.6" stroke="#cccccc" stroke-width="1.4" fill="none"/><path d="M69.2 1107V1115.8 M69.2 1115Q70 1111.5 78.8 1110.7" stroke="#cccccc" stroke-width="1.4" fill="none"/><path d="M148.9 1107.6A7.2 7.2 0 0 1 162.4 1112 M159.3 1110.2 162.5 1113.3 165.6 1110.2 M161.6 1115.3A7.2 7.2 0 0 1 148 1111.5 M144.8 1112.6 148 1109.5 151.2 1112.6" stroke="#cccccc" stroke-width="1.6" fill="none"/><circle cx="200.3" cy="1111.4" r="9" stroke="#cccccc" stroke-width="1.5" fill="none"/><path d="M196.5 1107.6 204.1 1115.2 M204.1 1107.6 196.5 1115.2" stroke="#cccccc" stroke-width="1.5"/><path d="M240.7 1103.2 232.2 1118.6H249.2Z" stroke="#cccccc" stroke-width="1.5" fill="none" stroke-linejoin="round"/><path d="M240.7 1108.5V1113.5 M240.7 1115.2V1116.6" stroke="#cccccc" stroke-width="1.6"/><path d="M1737.5 1103.5Q1735 1103.5 1735 1106V1109.5Q1735 1111.5 1733.5 1111.5Q1735 1111.5 1735 1113.5V1117Q1735 1119.5 1737.5 1119.5 M1743 1103.5Q1745.5 1103.5 1745.5 1106V1110" stroke="#cccccc" stroke-width="1.4" fill="none"/><circle cx="1746.5" cy="1117" r="4.2" fill="#cccccc"/><path d="M1744.9 1115.4 1748.1 1118.6 M1748.1 1115.4 1744.9 1118.6" stroke="#181818" stroke-width="1.1"/><g transform="translate(1831,1102.5) scale(0.88)">
<path fill="#cccccc" d="M12.5 4.2C11.3 1.5 9 0.8 6.6 1.1 3.9 1.5 2.6 3.2 2.8 6.3L2.9 8C1.3 8.7 0 10.3 0 12.8V15.7C0 18.3 5.5 21.8 12.5 21.8S25 18.3 25 15.7V12.8C25 10.3 23.7 8.7 22.1 8L22.2 6.3C22.4 3.2 21.1 1.5 18.4 1.1 16 0.8 13.7 1.5 12.5 4.2Z"/>
<path fill="#181818" d="M5.2 4.6C5.5 3.3 6.6 3 8 3.1 9.7 3.3 10.8 4.3 10.8 6.3 10.8 8.4 9.6 9.4 7.8 9.4 5.9 9.4 5 8.5 5 6.5Z M19.8 4.6C19.5 3.3 18.4 3 17 3.1 15.3 3.3 14.2 4.3 14.2 6.3 14.2 8.4 15.4 9.4 17.2 9.4 19.1 9.4 20 8.5 20 6.5Z"/>
<path fill="#181818" d="M4.5 12.2C6.5 11.2 9.5 10.8 12.5 10.8S18.5 11.2 20.5 12.2V17.8C18.5 18.8 15.5 19.3 12.5 19.3S6.5 18.8 4.5 17.8Z"/>
<rect x="8.3" y="13.2" width="2.2" height="4.2" rx="1.1" fill="#cccccc"/>
<rect x="14.5" y="13.2" width="2.2" height="4.2" rx="1.1" fill="#cccccc"/>
</g><path d="M1880 1117.5H1894.5Q1892.5 1115.5 1892.5 1112V1109.5Q1892.5 1103.5 1887.2 1103.5Q1882 1103.5 1882 1109.5V1112Q1882 1115.5 1880 1117.5Z" stroke="#cccccc" stroke-width="1.5" fill="none" stroke-linejoin="round"/><path d="M1885 1119.5Q1885.5 1121.2 1887.2 1121.2Q1889 1121.2 1889.5 1119.5" stroke="#cccccc" stroke-width="1.5" fill="none"/><g opacity="0.5"><path fill="#808080" d="M1787.3 138.1h2.0v1.5h-2.0zM1801.3 138.1h1.0v1.5h-1.0zM1787.3 140.1h1.0v1.5h-1.0zM1802.3 140.1h1.0v1.5h-1.0zM1787.3 144.1h1.0v1.5h-1.0zM1792.3 144.1h1.0v1.5h-1.0zM1791.3 146.1h1.0v1.5h-1.0zM1812.3 146.1h1.0v1.5h-1.0zM1791.3 148.1h1.0v1.5h-1.0zM1860.3 148.1h1.0v1.5h-1.0zM1791.3 150.1h1.0v1.5h-1.0zM1797.3 150.1h1.0v1.5h-1.0zM1806.3 150.1h2.0v1.5h-2.0zM1813.3 150.1h1.0v1.5h-1.0zM1791.3 152.1h1.0v1.5h-1.0zM1797.3 152.1h1.0v1.5h-1.0zM1791.3 234.1h2.0v1.5h-2.0zM1798.3 234.1h1.0v1.5h-1.0zM1787.3 236.1h2.0v1.5h-2.0zM1793.3 236.1h1.0v1.5h-1.0zM1787.3 240.1h1.0v1.5h-1.0zM1792.3 240.1h1.0v1.5h-1.0zM1791.3 242.1h1.0v1.5h-1.0zM1794.3 242.1h1.0v1.5h-1.0zM1803.3 242.1h2.0v1.5h-2.0zM1807.3 242.1h1.0v1.5h-1.0zM1791.3 244.1h1.0v1.5h-1.0zM1806.3 244.1h1.0v1.5h-1.0zM1816.3 244.1h2.0v1.5h-2.0zM1821.3 244.1h1.0v1.5h-1.0zM1791.3 246.1h1.0v1.5h-1.0zM1815.3 246.1h1.0v1.5h-1.0zM1795.3 248.1h1.0v1.5h-1.0zM1843.3 248.1h3.0v1.5h-3.0zM1852.3 248.1h1.0v1.5h-1.0zM1791.3 250.1h2.0v1.5h-2.0zM1796.3 250.1h1.0v1.5h-1.0zM1791.3 252.1h1.0v1.5h-1.0zM1809.3 252.1h1.0v1.5h-1.0zM1795.3 254.1h1.0v1.5h-1.0zM1825.3 254.1h1.0v1.5h-1.0zM1799.3 256.1h1.0v1.5h-1.0zM1799.3 258.1h1.0v1.5h-1.0zM1799.3 260.1h1.0v1.5h-1.0zM1799.3 262.1h1.0v1.5h-1.0zM1799.3 264.1h1.0v1.5h-1.0zM1795.3 266.1h1.0v1.5h-1.0zM1825.3 266.1h1.0v1.5h-1.0zM1799.3 268.1h1.0v1.5h-1.0zM1799.3 270.1h1.0v1.5h-1.0zM1799.3 272.1h1.0v1.5h-1.0zM1799.3 274.1h1.0v1.5h-1.0zM1799.3 276.1h1.0v1.5h-1.0zM1893.3 276.1h1.0v1.5h-1.0zM1791.3 278.1h2.0v1.5h-2.0zM1796.3 278.1h1.0v1.5h-1.0zM1791.3 282.1h1.0v1.5h-1.0zM1798.3 282.1h1.0v1.5h-1.0zM1791.3 694.1h2.0v1.5h-2.0zM1799.3 694.1h1.0v1.5h-1.0zM1787.3 696.1h2.0v1.5h-2.0zM1793.3 696.1h1.0v1.5h-1.0zM1787.3 700.1h2.0v1.5h-2.0zM1793.3 700.1h1.0v1.5h-1.0z"/><path fill="#569cd6" d="M1789.3 138.1h7.0v1.5h-7.0zM1788.3 140.1h4.0v1.5h-4.0zM1788.3 144.1h4.0v1.5h-4.0zM1792.3 146.1h4.0v1.5h-4.0zM1792.3 148.1h4.0v1.5h-4.0zM1792.3 150.1h5.0v1.5h-5.0zM1808.3 150.1h5.0v1.5h-5.0zM1792.3 152.1h5.0v1.5h-5.0zM1793.3 234.1h5.0v1.5h-5.0zM1789.3 236.1h4.0v1.5h-4.0zM1788.3 240.1h4.0v1.5h-4.0zM1792.3 242.1h2.0v1.5h-2.0zM1805.3 242.1h2.0v1.5h-2.0zM1792.3 244.1h3.0v1.5h-3.0zM1818.3 244.1h3.0v1.5h-3.0zM1792.3 246.1h3.0v1.5h-3.0zM1796.3 248.1h6.0v1.5h-6.0zM1846.3 248.1h6.0v1.5h-6.0zM1793.3 250.1h3.0v1.5h-3.0zM1792.3 252.1h3.0v1.5h-3.0zM1796.3 254.1h3.0v1.5h-3.0zM1800.3 256.1h6.0v1.5h-6.0zM1800.3 258.1h6.0v1.5h-6.0zM1800.3 260.1h6.0v1.5h-6.0zM1800.3 262.1h6.0v1.5h-6.0zM1800.3 264.1h6.0v1.5h-6.0zM1796.3 266.1h3.0v1.5h-3.0zM1800.3 268.1h6.0v1.5h-6.0zM1800.3 270.1h6.0v1.5h-6.0zM1800.3 272.1h6.0v1.5h-6.0zM1800.3 274.1h6.0v1.5h-6.0zM1800.3 276.1h6.0v1.5h-6.0zM1793.3 278.1h3.0v1.5h-3.0zM1792.3 282.1h6.0v1.5h-6.0zM1795.3 284.1h5.0v1.5h-5.0zM1795.3 286.1h5.0v1.5h-5.0zM1795.3 288.1h5.0v1.5h-5.0zM1795.3 290.1h5.0v1.5h-5.0zM1795.3 292.1h5.0v1.5h-5.0zM1795.3 294.1h3.0v1.5h-3.0zM1795.3 296.1h3.0v1.5h-3.0zM1795.3 298.1h3.0v1.5h-3.0zM1810.3 298.1h5.0v1.5h-5.0zM1795.3 304.1h5.0v1.5h-5.0zM1795.3 326.1h5.0v1.5h-5.0zM1795.3 346.1h3.0v1.5h-3.0zM1795.3 348.1h3.0v1.5h-3.0zM1814.3 348.1h4.0v1.5h-4.0zM1795.3 350.1h3.0v1.5h-3.0zM1795.3 352.1h3.0v1.5h-3.0zM1795.3 354.1h3.0v1.5h-3.0zM1795.3 360.1h8.0v1.5h-8.0zM1799.3 362.1h5.0v1.5h-5.0zM1795.3 378.1h8.0v1.5h-8.0zM1804.3 380.1h3.0v1.5h-3.0zM1808.3 382.1h3.0v1.5h-3.0zM1811.3 386.1h5.0v1.5h-5.0zM1811.3 388.1h5.0v1.5h-5.0zM1822.3 396.1h4.0v1.5h-4.0zM1806.3 406.1h5.0v1.5h-5.0zM1795.3 414.1h8.0v1.5h-8.0zM1804.3 416.1h3.0v1.5h-3.0zM1808.3 418.1h3.0v1.5h-3.0zM1811.3 422.1h5.0v1.5h-5.0zM1795.3 442.1h8.0v1.5h-8.0zM1799.3 444.1h3.0v1.5h-3.0zM1804.3 446.1h3.0v1.5h-3.0zM1795.3 476.1h8.0v1.5h-8.0zM1804.3 484.1h3.0v1.5h-3.0zM1808.3 486.1h3.0v1.5h-3.0zM1808.3 508.1h3.0v1.5h-3.0zM1812.3 510.1h3.0v1.5h-3.0zM1795.3 540.1h8.0v1.5h-8.0zM1807.3 624.1h5.0v1.5h-5.0zM1795.3 646.1h8.0v1.5h-8.0zM1810.3 656.1h5.0v1.5h-5.0zM1795.3 668.1h8.0v1.5h-8.0zM1793.3 694.1h6.0v1.5h-6.0zM1789.3 696.1h4.0v1.5h-4.0zM1789.3 700.1h4.0v1.5h-4.0z"/><path fill="#9cdcfe" d="M1797.3 138.1h4.0v1.5h-4.0zM1793.3 140.1h4.0v1.5h-4.0zM1797.3 146.1h7.0v1.5h-7.0zM1797.3 148.1h4.0v1.5h-4.0zM1813.3 148.1h7.0v1.5h-7.0zM1799.3 156.1h16.0v1.5h-16.0zM1799.3 158.1h7.0v1.5h-7.0zM1799.3 160.1h14.0v1.5h-14.0zM1799.3 162.1h11.0v1.5h-11.0zM1799.3 164.1h11.0v1.5h-11.0zM1799.3 172.1h10.0v1.5h-10.0zM1799.3 180.1h6.0v1.5h-6.0zM1799.3 182.1h16.0v1.5h-16.0zM1799.3 190.1h9.0v1.5h-9.0zM1799.3 192.1h6.0v1.5h-6.0zM1799.3 200.1h10.0v1.5h-10.0zM1799.3 208.1h7.0v1.5h-7.0zM1799.3 210.1h9.0v1.5h-9.0zM1799.3 212.1h6.0v1.5h-6.0zM1799.3 214.1h6.0v1.5h-6.0zM1799.3 216.1h16.0v1.5h-16.0zM1799.3 218.1h5.0v1.5h-5.0zM1799.3 220.1h6.0v1.5h-6.0zM1799.3 222.1h13.0v1.5h-13.0zM1799.3 230.1h16.0v1.5h-16.0zM1796.3 244.1h2.0v1.5h-2.0zM1796.3 246.1h2.0v1.5h-2.0zM1803.3 248.1h2.0v1.5h-2.0zM1819.3 248.1h5.0v1.5h-5.0zM1831.3 248.1h6.0v1.5h-6.0zM1796.3 252.1h2.0v1.5h-2.0zM1800.3 254.1h5.0v1.5h-5.0zM1816.3 254.1h2.0v1.5h-2.0zM1807.3 256.1h5.0v1.5h-5.0zM1827.3 256.1h2.0v1.5h-2.0zM1840.3 256.1h11.0v1.5h-11.0zM1873.3 256.1h12.0v1.5h-12.0zM1807.3 258.1h5.0v1.5h-5.0zM1827.3 258.1h2.0v1.5h-2.0zM1842.3 258.1h11.0v1.5h-11.0zM1877.3 258.1h12.0v1.5h-12.0zM1807.3 260.1h5.0v1.5h-5.0zM1827.3 260.1h2.0v1.5h-2.0zM1841.3 260.1h11.0v1.5h-11.0zM1875.3 260.1h12.0v1.5h-12.0zM1807.3 262.1h5.0v1.5h-5.0zM1820.3 262.1h2.0v1.5h-2.0zM1833.3 262.1h5.0v1.5h-5.0zM1856.3 262.1h11.0v1.5h-11.0zM1889.3 262.1h10.0v1.5h-10.0zM1807.3 264.1h5.0v1.5h-5.0zM1827.3 264.1h2.0v1.5h-2.0zM1840.3 264.1h11.0v1.5h-11.0zM1873.3 264.1h12.0v1.5h-12.0zM1800.3 266.1h5.0v1.5h-5.0zM1816.3 266.1h2.0v1.5h-2.0zM1807.3 268.1h5.0v1.5h-5.0zM1827.3 268.1h2.0v1.5h-2.0zM1840.3 268.1h11.0v1.5h-11.0zM1873.3 268.1h12.0v1.5h-12.0zM1807.3 270.1h5.0v1.5h-5.0zM1827.3 270.1h2.0v1.5h-2.0zM1842.3 270.1h11.0v1.5h-11.0zM1877.3 270.1h12.0v1.5h-12.0zM1807.3 272.1h5.0v1.5h-5.0zM1827.3 272.1h2.0v1.5h-2.0zM1841.3 272.1h11.0v1.5h-11.0zM1875.3 272.1h12.0v1.5h-12.0zM1807.3 274.1h5.0v1.5h-5.0zM1820.3 274.1h2.0v1.5h-2.0zM1833.3 274.1h5.0v1.5h-5.0zM1856.3 274.1h11.0v1.5h-11.0zM1889.3 274.1h10.0v1.5h-10.0zM1807.3 276.1h5.0v1.5h-5.0zM1827.3 276.1h2.0v1.5h-2.0zM1841.3 276.1h7.0v1.5h-7.0zM1865.3 276.1h12.0v1.5h-12.0zM1801.3 284.1h6.0v1.5h-6.0zM1801.3 286.1h3.0v1.5h-3.0zM1807.3 286.1h6.0v1.5h-6.0zM1799.3 294.1h5.0v1.5h-5.0zM1799.3 296.1h8.0v1.5h-8.0zM1799.3 298.1h8.0v1.5h-8.0zM1799.3 346.1h5.0v1.5h-5.0zM1799.3 348.1h12.0v1.5h-12.0zM1799.3 350.1h8.0v1.5h-8.0zM1799.3 352.1h8.0v1.5h-8.0zM1799.3 354.1h12.0v1.5h-12.0zM1805.3 362.1h10.0v1.5h-10.0zM1852.3 362.1h6.0v1.5h-6.0zM1799.3 364.1h12.0v1.5h-12.0zM1821.3 364.1h10.0v1.5h-10.0zM1799.3 366.1h12.0v1.5h-12.0zM1821.3 366.1h10.0v1.5h-10.0zM1799.3 368.1h8.0v1.5h-8.0zM1851.3 368.1h12.0v1.5h-12.0zM1867.3 368.1h6.0v1.5h-6.0zM1799.3 370.1h8.0v1.5h-8.0zM1808.3 380.1h1.0v1.5h-1.0zM1815.3 380.1h1.0v1.5h-1.0zM1819.3 380.1h12.0v1.5h-12.0zM1832.3 380.1h6.0v1.5h-6.0zM1840.3 380.1h1.0v1.5h-1.0zM1812.3 382.1h1.0v1.5h-1.0zM1819.3 382.1h1.0v1.5h-1.0zM1823.3 382.1h12.0v1.5h-12.0zM1836.3 382.1h1.0v1.5h-1.0zM1839.3 382.1h6.0v1.5h-6.0zM1847.3 382.1h1.0v1.5h-1.0zM1811.3 384.1h12.0v1.5h-12.0zM1824.3 384.1h1.0v1.5h-1.0zM1827.3 384.1h1.0v1.5h-1.0zM1817.3 386.1h6.0v1.5h-6.0zM1826.3 386.1h8.0v1.5h-8.0zM1837.3 386.1h1.0v1.5h-1.0zM1817.3 388.1h6.0v1.5h-6.0zM1826.3 388.1h8.0v1.5h-8.0zM1837.3 388.1h1.0v1.5h-1.0zM1815.3 390.1h6.0v1.5h-6.0zM1829.3 390.1h6.0v1.5h-6.0zM1815.3 392.1h6.0v1.5h-6.0zM1816.3 394.1h6.0v1.5h-6.0zM1831.3 394.1h5.0v1.5h-5.0zM1837.3 394.1h6.0v1.5h-6.0zM1845.3 394.1h6.0v1.5h-6.0zM1808.3 416.1h1.0v1.5h-1.0zM1815.3 416.1h1.0v1.5h-1.0zM1819.3 416.1h12.0v1.5h-12.0zM1832.3 416.1h6.0v1.5h-6.0zM1840.3 416.1h1.0v1.5h-1.0zM1812.3 418.1h1.0v1.5h-1.0zM1819.3 418.1h1.0v1.5h-1.0zM1823.3 418.1h12.0v1.5h-12.0zM1836.3 418.1h1.0v1.5h-1.0zM1839.3 418.1h6.0v1.5h-6.0zM1847.3 418.1h1.0v1.5h-1.0zM1811.3 420.1h12.0v1.5h-12.0zM1824.3 420.1h1.0v1.5h-1.0zM1827.3 420.1h1.0v1.5h-1.0zM1817.3 422.1h6.0v1.5h-6.0zM1826.3 422.1h8.0v1.5h-8.0zM1837.3 422.1h1.0v1.5h-1.0zM1815.3 424.1h6.0v1.5h-6.0zM1815.3 426.1h5.0v1.5h-5.0zM1821.3 426.1h6.0v1.5h-6.0zM1829.3 426.1h8.0v1.5h-8.0zM1840.3 426.1h1.0v1.5h-1.0zM1845.3 426.1h12.0v1.5h-12.0zM1803.3 444.1h12.0v1.5h-12.0zM1808.3 446.1h1.0v1.5h-1.0zM1830.3 446.1h1.0v1.5h-1.0zM1838.3 446.1h1.0v1.5h-1.0zM1807.3 448.1h5.0v1.5h-5.0zM1813.3 448.1h1.0v1.5h-1.0zM1822.3 448.1h4.0v1.5h-4.0zM1830.3 448.1h4.0v1.5h-4.0zM1807.3 450.1h5.0v1.5h-5.0zM1820.3 450.1h1.0v1.5h-1.0zM1807.3 452.1h5.0v1.5h-5.0zM1807.3 454.1h12.0v1.5h-12.0zM1807.3 456.1h1.0v1.5h-1.0zM1803.3 462.1h12.0v1.5h-12.0zM1803.3 464.1h5.0v1.5h-5.0zM1812.3 464.1h12.0v1.5h-12.0zM1836.3 466.1h11.0v1.5h-11.0zM1799.3 478.1h3.0v1.5h-3.0zM1819.3 478.1h6.0v1.5h-6.0zM1826.3 478.1h5.0v1.5h-5.0zM1833.3 478.1h6.0v1.5h-6.0zM1840.3 478.1h6.0v1.5h-6.0zM1808.3 484.1h1.0v1.5h-1.0zM1815.3 484.1h1.0v1.5h-1.0zM1833.3 484.1h1.0v1.5h-1.0zM1812.3 486.1h1.0v1.5h-1.0zM1819.3 486.1h1.0v1.5h-1.0zM1836.3 486.1h1.0v1.5h-1.0zM1811.3 488.1h5.0v1.5h-5.0zM1817.3 488.1h1.0v1.5h-1.0zM1820.3 488.1h1.0v1.5h-1.0zM1811.3 490.1h3.0v1.5h-3.0zM1815.3 490.1h9.0v1.5h-9.0zM1827.3 490.1h5.0v1.5h-5.0zM1833.3 490.1h1.0v1.5h-1.0zM1836.3 490.1h1.0v1.5h-1.0zM1811.3 492.1h3.0v1.5h-3.0zM1824.3 492.1h1.0v1.5h-1.0zM1840.3 492.1h1.0v1.5h-1.0zM1803.3 504.1h12.0v1.5h-12.0zM1803.3 506.1h3.0v1.5h-3.0zM1807.3 506.1h9.0v1.5h-9.0zM1819.3 506.1h12.0v1.5h-12.0zM1812.3 508.1h1.0v1.5h-1.0zM1819.3 508.1h1.0v1.5h-1.0zM1823.3 508.1h12.0v1.5h-12.0zM1836.3 508.1h6.0v1.5h-6.0zM1844.3 508.1h1.0v1.5h-1.0zM1816.3 510.1h1.0v1.5h-1.0zM1823.3 510.1h1.0v1.5h-1.0zM1827.3 510.1h12.0v1.5h-12.0zM1840.3 510.1h1.0v1.5h-1.0zM1843.3 510.1h6.0v1.5h-6.0zM1851.3 510.1h1.0v1.5h-1.0zM1815.3 512.1h12.0v1.5h-12.0zM1828.3 512.1h1.0v1.5h-1.0zM1831.3 512.1h1.0v1.5h-1.0zM1815.3 514.1h3.0v1.5h-3.0zM1820.3 516.1h8.0v1.5h-8.0zM1831.3 516.1h1.0v1.5h-1.0zM1820.3 518.1h8.0v1.5h-8.0zM1831.3 518.1h1.0v1.5h-1.0zM1803.3 542.1h8.0v1.5h-8.0zM1799.3 546.1h8.0v1.5h-8.0zM1803.3 550.1h8.0v1.5h-8.0zM1821.3 562.1h8.0v1.5h-8.0zM1833.3 580.1h1.0v1.5h-1.0zM1803.3 582.1h8.0v1.5h-8.0zM1807.3 586.1h1.0v1.5h-1.0zM1809.3 586.1h3.0v1.5h-3.0zM1807.3 590.1h8.0v1.5h-8.0zM1824.3 592.1h8.0v1.5h-8.0zM1807.3 598.1h8.0v1.5h-8.0zM1824.3 600.1h8.0v1.5h-8.0zM1807.3 606.1h8.0v1.5h-8.0zM1811.3 610.1h8.0v1.5h-8.0zM1813.3 624.1h13.0v1.5h-13.0zM1829.3 624.1h12.0v1.5h-12.0zM1807.3 626.1h12.0v1.5h-12.0zM1822.3 626.1h13.0v1.5h-13.0zM1844.3 626.1h1.0v1.5h-1.0zM1847.3 626.1h1.0v1.5h-1.0zM1811.3 628.1h13.0v1.5h-13.0zM1829.3 628.1h3.0v1.5h-3.0zM1836.3 628.1h3.0v1.5h-3.0zM1840.3 628.1h1.0v1.5h-1.0zM1824.3 632.1h12.0v1.5h-12.0zM1839.3 632.1h13.0v1.5h-13.0zM1803.3 648.1h8.0v1.5h-8.0zM1827.3 648.1h8.0v1.5h-8.0zM1799.3 650.1h5.0v1.5h-5.0zM1799.3 652.1h5.0v1.5h-5.0zM1832.3 654.1h11.0v1.5h-11.0zM1799.3 656.1h8.0v1.5h-8.0zM1799.3 660.1h8.0v1.5h-8.0zM1822.3 660.1h10.0v1.5h-10.0zM1799.3 670.1h8.0v1.5h-8.0zM1811.3 670.1h8.0v1.5h-8.0zM1803.3 672.1h8.0v1.5h-8.0zM1803.3 674.1h3.0v1.5h-3.0zM1807.3 674.1h9.0v1.5h-9.0zM1803.3 676.1h3.0v1.5h-3.0zM1822.3 676.1h6.0v1.5h-6.0zM1829.3 676.1h5.0v1.5h-5.0zM1836.3 676.1h6.0v1.5h-6.0zM1843.3 676.1h6.0v1.5h-6.0zM1803.3 678.1h3.0v1.5h-3.0zM1807.3 678.1h9.0v1.5h-9.0zM1803.3 680.1h3.0v1.5h-3.0zM1807.3 680.1h4.0v1.5h-4.0zM1803.3 682.1h3.0v1.5h-3.0zM1807.3 682.1h9.0v1.5h-9.0zM1803.3 684.1h3.0v1.5h-3.0zM1825.3 684.1h6.0v1.5h-6.0zM1832.3 684.1h5.0v1.5h-5.0zM1843.3 684.1h6.0v1.5h-6.0zM1850.3 684.1h6.0v1.5h-6.0z"/><path fill="#cccccc" d="M1797.3 140.1h1.0v1.5h-1.0zM1804.3 146.1h1.0v1.5h-1.0zM1801.3 148.1h1.0v1.5h-1.0zM1820.3 148.1h1.0v1.5h-1.0zM1798.3 150.1h8.0v1.5h-8.0zM1800.3 154.1h1.0v1.5h-1.0zM1815.3 156.1h1.0v1.5h-1.0zM1825.3 156.1h1.0v1.5h-1.0zM1806.3 158.1h1.0v1.5h-1.0zM1812.3 158.1h1.0v1.5h-1.0zM1813.3 160.1h1.0v1.5h-1.0zM1821.3 160.1h1.0v1.5h-1.0zM1810.3 162.1h1.0v1.5h-1.0zM1818.3 162.1h1.0v1.5h-1.0zM1810.3 164.1h1.0v1.5h-1.0zM1817.3 164.1h1.0v1.5h-1.0zM1829.3 164.1h1.0v1.5h-1.0zM1795.3 166.1h1.0v1.5h-1.0zM1811.3 170.1h1.0v1.5h-1.0zM1809.3 172.1h1.0v1.5h-1.0zM1815.3 172.1h1.0v1.5h-1.0zM1795.3 174.1h1.0v1.5h-1.0zM1807.3 178.1h1.0v1.5h-1.0zM1805.3 180.1h1.0v1.5h-1.0zM1822.3 180.1h1.0v1.5h-1.0zM1815.3 182.1h1.0v1.5h-1.0zM1822.3 182.1h1.0v1.5h-1.0zM1795.3 184.1h1.0v1.5h-1.0zM1802.3 188.1h1.0v1.5h-1.0zM1808.3 190.1h1.0v1.5h-1.0zM1814.3 190.1h1.0v1.5h-1.0zM1805.3 192.1h1.0v1.5h-1.0zM1813.3 192.1h1.0v1.5h-1.0zM1795.3 194.1h1.0v1.5h-1.0zM1805.3 198.1h1.0v1.5h-1.0zM1809.3 200.1h1.0v1.5h-1.0zM1815.3 200.1h1.0v1.5h-1.0zM1795.3 202.1h1.0v1.5h-1.0zM1802.3 206.1h1.0v1.5h-1.0zM1806.3 208.1h1.0v1.5h-1.0zM1817.3 208.1h1.0v1.5h-1.0zM1808.3 210.1h1.0v1.5h-1.0zM1814.3 210.1h1.0v1.5h-1.0zM1805.3 212.1h1.0v1.5h-1.0zM1813.3 212.1h1.0v1.5h-1.0zM1805.3 214.1h1.0v1.5h-1.0zM1814.3 214.1h1.0v1.5h-1.0zM1815.3 216.1h1.0v1.5h-1.0zM1825.3 216.1h1.0v1.5h-1.0zM1804.3 218.1h1.0v1.5h-1.0zM1811.3 218.1h1.0v1.5h-1.0zM1805.3 220.1h1.0v1.5h-1.0zM1811.3 220.1h1.0v1.5h-1.0zM1812.3 222.1h1.0v1.5h-1.0zM1817.3 222.1h1.0v1.5h-1.0zM1795.3 224.1h1.0v1.5h-1.0zM1808.3 228.1h1.0v1.5h-1.0zM1815.3 230.1h1.0v1.5h-1.0zM1825.3 230.1h1.0v1.5h-1.0zM1795.3 232.1h1.0v1.5h-1.0zM1795.3 242.1h8.0v1.5h-8.0zM1798.3 244.1h1.0v1.5h-1.0zM1807.3 244.1h7.0v1.5h-7.0zM1815.3 244.1h1.0v1.5h-1.0zM1798.3 246.1h1.0v1.5h-1.0zM1805.3 248.1h1.0v1.5h-1.0zM1824.3 248.1h1.0v1.5h-1.0zM1837.3 248.1h1.0v1.5h-1.0zM1798.3 252.1h1.0v1.5h-1.0zM1805.3 254.1h1.0v1.5h-1.0zM1818.3 254.1h1.0v1.5h-1.0zM1812.3 256.1h1.0v1.5h-1.0zM1829.3 256.1h1.0v1.5h-1.0zM1851.3 256.1h1.0v1.5h-1.0zM1885.3 256.1h1.0v1.5h-1.0zM1812.3 258.1h1.0v1.5h-1.0zM1829.3 258.1h1.0v1.5h-1.0zM1853.3 258.1h1.0v1.5h-1.0zM1889.3 258.1h1.0v1.5h-1.0zM1812.3 260.1h1.0v1.5h-1.0zM1829.3 260.1h1.0v1.5h-1.0zM1852.3 260.1h1.0v1.5h-1.0zM1887.3 260.1h1.0v1.5h-1.0zM1812.3 262.1h1.0v1.5h-1.0zM1822.3 262.1h1.0v1.5h-1.0zM1838.3 262.1h1.0v1.5h-1.0zM1867.3 262.1h1.0v1.5h-1.0zM1812.3 264.1h1.0v1.5h-1.0zM1829.3 264.1h1.0v1.5h-1.0zM1851.3 264.1h1.0v1.5h-1.0zM1885.3 264.1h1.0v1.5h-1.0zM1805.3 266.1h1.0v1.5h-1.0zM1818.3 266.1h1.0v1.5h-1.0zM1812.3 268.1h1.0v1.5h-1.0zM1829.3 268.1h1.0v1.5h-1.0zM1851.3 268.1h1.0v1.5h-1.0zM1885.3 268.1h1.0v1.5h-1.0zM1812.3 270.1h1.0v1.5h-1.0zM1829.3 270.1h1.0v1.5h-1.0zM1853.3 270.1h1.0v1.5h-1.0zM1889.3 270.1h1.0v1.5h-1.0zM1812.3 272.1h1.0v1.5h-1.0zM1829.3 272.1h1.0v1.5h-1.0zM1852.3 272.1h1.0v1.5h-1.0zM1887.3 272.1h1.0v1.5h-1.0zM1812.3 274.1h1.0v1.5h-1.0zM1822.3 274.1h1.0v1.5h-1.0zM1838.3 274.1h1.0v1.5h-1.0zM1867.3 274.1h1.0v1.5h-1.0zM1812.3 276.1h1.0v1.5h-1.0zM1829.3 276.1h1.0v1.5h-1.0zM1848.3 276.1h1.0v1.5h-1.0zM1877.3 276.1h1.0v1.5h-1.0zM1894.3 276.1h5.0v1.5h-5.0zM1808.3 284.1h1.0v1.5h-1.0zM1818.3 284.1h1.0v1.5h-1.0zM1833.3 284.1h1.0v1.5h-1.0zM1846.3 284.1h2.0v1.5h-2.0zM1805.3 286.1h1.0v1.5h-1.0zM1813.3 286.1h1.0v1.5h-1.0zM1824.3 286.1h1.0v1.5h-1.0zM1829.3 286.1h2.0v1.5h-2.0zM1812.3 288.1h1.0v1.5h-1.0zM1816.3 288.1h1.0v1.5h-1.0zM1813.3 290.1h1.0v1.5h-1.0zM1817.3 290.1h1.0v1.5h-1.0zM1814.3 292.1h1.0v1.5h-1.0zM1818.3 292.1h1.0v1.5h-1.0zM1805.3 294.1h1.0v1.5h-1.0zM1808.3 294.1h1.0v1.5h-1.0zM1807.3 296.1h1.0v1.5h-1.0zM1808.3 298.1h1.0v1.5h-1.0zM1815.3 298.1h1.0v1.5h-1.0zM1808.3 304.1h1.0v1.5h-1.0zM1810.3 304.1h1.0v1.5h-1.0zM1799.3 306.1h2.0v1.5h-2.0zM1802.3 306.1h1.0v1.5h-1.0zM1805.3 306.1h1.0v1.5h-1.0zM1808.3 306.1h1.0v1.5h-1.0zM1811.3 306.1h3.0v1.5h-3.0zM1799.3 308.1h2.0v1.5h-2.0zM1802.3 308.1h1.0v1.5h-1.0zM1805.3 308.1h2.0v1.5h-2.0zM1808.3 308.1h1.0v1.5h-1.0zM1810.3 308.1h1.0v1.5h-1.0zM1813.3 308.1h3.0v1.5h-3.0zM1799.3 310.1h2.0v1.5h-2.0zM1802.3 310.1h1.0v1.5h-1.0zM1805.3 310.1h1.0v1.5h-1.0zM1808.3 310.1h2.0v1.5h-2.0zM1811.3 310.1h1.0v1.5h-1.0zM1813.3 310.1h1.0v1.5h-1.0zM1816.3 310.1h1.0v1.5h-1.0zM1819.3 310.1h3.0v1.5h-3.0zM1799.3 312.1h2.0v1.5h-2.0zM1802.3 312.1h1.0v1.5h-1.0zM1805.3 312.1h1.0v1.5h-1.0zM1808.3 312.1h2.0v1.5h-2.0zM1811.3 312.1h1.0v1.5h-1.0zM1813.3 312.1h1.0v1.5h-1.0zM1816.3 312.1h1.0v1.5h-1.0zM1819.3 312.1h3.0v1.5h-3.0zM1799.3 314.1h2.0v1.5h-2.0zM1802.3 314.1h1.0v1.5h-1.0zM1805.3 314.1h1.0v1.5h-1.0zM1808.3 314.1h2.0v1.5h-2.0zM1811.3 314.1h1.0v1.5h-1.0zM1813.3 314.1h1.0v1.5h-1.0zM1816.3 314.1h1.0v1.5h-1.0zM1819.3 314.1h3.0v1.5h-3.0zM1799.3 316.1h2.0v1.5h-2.0zM1802.3 316.1h1.0v1.5h-1.0zM1805.3 316.1h1.0v1.5h-1.0zM1808.3 316.1h2.0v1.5h-2.0zM1811.3 316.1h1.0v1.5h-1.0zM1813.3 316.1h1.0v1.5h-1.0zM1816.3 316.1h1.0v1.5h-1.0zM1819.3 316.1h3.0v1.5h-3.0zM1799.3 318.1h2.0v1.5h-2.0zM1802.3 318.1h1.0v1.5h-1.0zM1805.3 318.1h1.0v1.5h-1.0zM1808.3 318.1h2.0v1.5h-2.0zM1811.3 318.1h1.0v1.5h-1.0zM1813.3 318.1h1.0v1.5h-1.0zM1816.3 318.1h1.0v1.5h-1.0zM1819.3 318.1h2.0v1.5h-2.0zM1795.3 320.1h2.0v1.5h-2.0zM1808.3 326.1h1.0v1.5h-1.0zM1810.3 326.1h1.0v1.5h-1.0zM1808.3 328.1h1.0v1.5h-1.0zM1808.3 330.1h1.0v1.5h-1.0zM1808.3 332.1h1.0v1.5h-1.0zM1808.3 334.1h1.0v1.5h-1.0zM1808.3 336.1h1.0v1.5h-1.0zM1808.3 338.1h1.0v1.5h-1.0zM1795.3 342.1h2.0v1.5h-2.0zM1805.3 346.1h1.0v1.5h-1.0zM1812.3 346.1h1.0v1.5h-1.0zM1825.3 346.1h2.0v1.5h-2.0zM1831.3 346.1h3.0v1.5h-3.0zM1837.3 346.1h3.0v1.5h-3.0zM1841.3 346.1h2.0v1.5h-2.0zM1849.3 346.1h1.0v1.5h-1.0zM1861.3 346.1h2.0v1.5h-2.0zM1867.3 346.1h1.0v1.5h-1.0zM1869.3 346.1h3.0v1.5h-3.0zM1812.3 348.1h1.0v1.5h-1.0zM1818.3 348.1h1.0v1.5h-1.0zM1808.3 350.1h1.0v1.5h-1.0zM1811.3 350.1h1.0v1.5h-1.0zM1808.3 352.1h1.0v1.5h-1.0zM1811.3 352.1h1.0v1.5h-1.0zM1812.3 354.1h1.0v1.5h-1.0zM1816.3 354.1h1.0v1.5h-1.0zM1815.3 360.1h2.0v1.5h-2.0zM1818.3 360.1h1.0v1.5h-1.0zM1816.3 362.1h1.0v1.5h-1.0zM1822.3 362.1h1.0v1.5h-1.0zM1828.3 362.1h1.0v1.5h-1.0zM1833.3 362.1h1.0v1.5h-1.0zM1840.3 362.1h2.0v1.5h-2.0zM1843.3 362.1h1.0v1.5h-1.0zM1851.3 362.1h1.0v1.5h-1.0zM1858.3 362.1h2.0v1.5h-2.0zM1812.3 364.1h1.0v1.5h-1.0zM1820.3 364.1h1.0v1.5h-1.0zM1831.3 364.1h2.0v1.5h-2.0zM1812.3 366.1h1.0v1.5h-1.0zM1820.3 366.1h1.0v1.5h-1.0zM1831.3 366.1h2.0v1.5h-2.0zM1808.3 368.1h1.0v1.5h-1.0zM1814.3 368.1h1.0v1.5h-1.0zM1820.3 368.1h1.0v1.5h-1.0zM1833.3 368.1h1.0v1.5h-1.0zM1836.3 368.1h1.0v1.5h-1.0zM1838.3 368.1h1.0v1.5h-1.0zM1844.3 368.1h1.0v1.5h-1.0zM1850.3 368.1h1.0v1.5h-1.0zM1863.3 368.1h1.0v1.5h-1.0zM1865.3 368.1h2.0v1.5h-2.0zM1874.3 368.1h1.0v1.5h-1.0zM1877.3 368.1h2.0v1.5h-2.0zM1808.3 370.1h1.0v1.5h-1.0zM1811.3 370.1h1.0v1.5h-1.0zM1795.3 372.1h1.0v1.5h-1.0zM1813.3 378.1h2.0v1.5h-2.0zM1816.3 378.1h1.0v1.5h-1.0zM1803.3 380.1h1.0v1.5h-1.0zM1810.3 380.1h1.0v1.5h-1.0zM1813.3 380.1h1.0v1.5h-1.0zM1817.3 380.1h1.0v1.5h-1.0zM1831.3 380.1h1.0v1.5h-1.0zM1838.3 380.1h1.0v1.5h-1.0zM1841.3 380.1h3.0v1.5h-3.0zM1845.3 380.1h1.0v1.5h-1.0zM1807.3 382.1h1.0v1.5h-1.0zM1814.3 382.1h1.0v1.5h-1.0zM1817.3 382.1h1.0v1.5h-1.0zM1821.3 382.1h1.0v1.5h-1.0zM1835.3 382.1h1.0v1.5h-1.0zM1837.3 382.1h2.0v1.5h-2.0zM1845.3 382.1h1.0v1.5h-1.0zM1848.3 382.1h3.0v1.5h-3.0zM1852.3 382.1h1.0v1.5h-1.0zM1810.3 384.1h1.0v1.5h-1.0zM1823.3 384.1h1.0v1.5h-1.0zM1825.3 384.1h2.0v1.5h-2.0zM1828.3 384.1h2.0v1.5h-2.0zM1831.3 384.1h1.0v1.5h-1.0zM1824.3 386.1h1.0v1.5h-1.0zM1835.3 386.1h1.0v1.5h-1.0zM1838.3 386.1h1.0v1.5h-1.0zM1824.3 388.1h1.0v1.5h-1.0zM1835.3 388.1h1.0v1.5h-1.0zM1838.3 388.1h1.0v1.5h-1.0zM1814.3 390.1h1.0v1.5h-1.0zM1822.3 390.1h1.0v1.5h-1.0zM1826.3 390.1h2.0v1.5h-2.0zM1836.3 390.1h2.0v1.5h-2.0zM1851.3 390.1h2.0v1.5h-2.0zM1822.3 392.1h2.0v1.5h-2.0zM1838.3 392.1h2.0v1.5h-2.0zM1815.3 394.1h1.0v1.5h-1.0zM1823.3 394.1h2.0v1.5h-2.0zM1828.3 394.1h2.0v1.5h-2.0zM1836.3 394.1h1.0v1.5h-1.0zM1843.3 394.1h2.0v1.5h-2.0zM1851.3 394.1h3.0v1.5h-3.0zM1855.3 394.1h1.0v1.5h-1.0zM1826.3 396.1h1.0v1.5h-1.0zM1811.3 398.1h1.0v1.5h-1.0zM1807.3 400.1h1.0v1.5h-1.0zM1803.3 402.1h1.0v1.5h-1.0zM1799.3 404.1h1.0v1.5h-1.0zM1811.3 406.1h1.0v1.5h-1.0zM1795.3 408.1h1.0v1.5h-1.0zM1809.3 414.1h2.0v1.5h-2.0zM1812.3 414.1h1.0v1.5h-1.0zM1803.3 416.1h1.0v1.5h-1.0zM1810.3 416.1h1.0v1.5h-1.0zM1813.3 416.1h1.0v1.5h-1.0zM1817.3 416.1h1.0v1.5h-1.0zM1831.3 416.1h1.0v1.5h-1.0zM1838.3 416.1h1.0v1.5h-1.0zM1841.3 416.1h3.0v1.5h-3.0zM1845.3 416.1h1.0v1.5h-1.0zM1807.3 418.1h1.0v1.5h-1.0zM1814.3 418.1h1.0v1.5h-1.0zM1817.3 418.1h1.0v1.5h-1.0zM1821.3 418.1h1.0v1.5h-1.0zM1835.3 418.1h1.0v1.5h-1.0zM1837.3 418.1h2.0v1.5h-2.0zM1845.3 418.1h1.0v1.5h-1.0zM1848.3 418.1h3.0v1.5h-3.0zM1852.3 418.1h1.0v1.5h-1.0zM1810.3 420.1h1.0v1.5h-1.0zM1823.3 420.1h1.0v1.5h-1.0zM1825.3 420.1h2.0v1.5h-2.0zM1828.3 420.1h2.0v1.5h-2.0zM1831.3 420.1h1.0v1.5h-1.0zM1824.3 422.1h1.0v1.5h-1.0zM1835.3 422.1h1.0v1.5h-1.0zM1838.3 422.1h1.0v1.5h-1.0zM1814.3 424.1h1.0v1.5h-1.0zM1822.3 424.1h2.0v1.5h-2.0zM1826.3 424.1h1.0v1.5h-1.0zM1828.3 424.1h1.0v1.5h-1.0zM1820.3 426.1h1.0v1.5h-1.0zM1827.3 426.1h2.0v1.5h-2.0zM1838.3 426.1h1.0v1.5h-1.0zM1841.3 426.1h1.0v1.5h-1.0zM1843.3 426.1h1.0v1.5h-1.0zM1857.3 426.1h1.0v1.5h-1.0zM1811.3 428.1h1.0v1.5h-1.0zM1807.3 430.1h1.0v1.5h-1.0zM1803.3 432.1h1.0v1.5h-1.0zM1799.3 434.1h1.0v1.5h-1.0zM1795.3 436.1h1.0v1.5h-1.0zM1814.3 442.1h2.0v1.5h-2.0zM1817.3 442.1h1.0v1.5h-1.0zM1816.3 444.1h1.0v1.5h-1.0zM1819.3 444.1h1.0v1.5h-1.0zM1803.3 446.1h1.0v1.5h-1.0zM1810.3 446.1h1.0v1.5h-1.0zM1825.3 446.1h1.0v1.5h-1.0zM1828.3 446.1h1.0v1.5h-1.0zM1832.3 446.1h2.0v1.5h-2.0zM1836.3 446.1h1.0v1.5h-1.0zM1839.3 446.1h3.0v1.5h-3.0zM1843.3 446.1h1.0v1.5h-1.0zM1806.3 448.1h1.0v1.5h-1.0zM1812.3 448.1h1.0v1.5h-1.0zM1814.3 448.1h2.0v1.5h-2.0zM1821.3 448.1h1.0v1.5h-1.0zM1827.3 448.1h2.0v1.5h-2.0zM1835.3 448.1h3.0v1.5h-3.0zM1840.3 448.1h2.0v1.5h-2.0zM1843.3 448.1h1.0v1.5h-1.0zM1812.3 450.1h1.0v1.5h-1.0zM1819.3 450.1h1.0v1.5h-1.0zM1821.3 450.1h1.0v1.5h-1.0zM1824.3 450.1h2.0v1.5h-2.0zM1812.3 452.1h1.0v1.5h-1.0zM1820.3 452.1h1.0v1.5h-1.0zM1826.3 452.1h1.0v1.5h-1.0zM1838.3 452.1h2.0v1.5h-2.0zM1844.3 452.1h1.0v1.5h-1.0zM1846.3 452.1h3.0v1.5h-3.0zM1819.3 454.1h3.0v1.5h-3.0zM1808.3 456.1h3.0v1.5h-3.0zM1803.3 458.1h1.0v1.5h-1.0zM1799.3 460.1h1.0v1.5h-1.0zM1802.3 462.1h1.0v1.5h-1.0zM1816.3 462.1h1.0v1.5h-1.0zM1819.3 462.1h1.0v1.5h-1.0zM1821.3 462.1h1.0v1.5h-1.0zM1809.3 464.1h2.0v1.5h-2.0zM1825.3 464.1h1.0v1.5h-1.0zM1830.3 464.1h1.0v1.5h-1.0zM1811.3 466.1h1.0v1.5h-1.0zM1826.3 466.1h1.0v1.5h-1.0zM1834.3 466.1h2.0v1.5h-2.0zM1848.3 466.1h1.0v1.5h-1.0zM1868.3 466.1h1.0v1.5h-1.0zM1799.3 468.1h1.0v1.5h-1.0zM1795.3 470.1h1.0v1.5h-1.0zM1808.3 476.1h2.0v1.5h-2.0zM1811.3 476.1h1.0v1.5h-1.0zM1802.3 478.1h1.0v1.5h-1.0zM1812.3 478.1h1.0v1.5h-1.0zM1814.3 478.1h1.0v1.5h-1.0zM1817.3 478.1h1.0v1.5h-1.0zM1825.3 478.1h1.0v1.5h-1.0zM1831.3 478.1h1.0v1.5h-1.0zM1839.3 478.1h1.0v1.5h-1.0zM1846.3 478.1h2.0v1.5h-2.0zM1803.3 484.1h1.0v1.5h-1.0zM1810.3 484.1h1.0v1.5h-1.0zM1813.3 484.1h1.0v1.5h-1.0zM1817.3 484.1h1.0v1.5h-1.0zM1831.3 484.1h1.0v1.5h-1.0zM1834.3 484.1h3.0v1.5h-3.0zM1838.3 484.1h1.0v1.5h-1.0zM1807.3 486.1h1.0v1.5h-1.0zM1814.3 486.1h1.0v1.5h-1.0zM1817.3 486.1h1.0v1.5h-1.0zM1821.3 486.1h1.0v1.5h-1.0zM1834.3 486.1h1.0v1.5h-1.0zM1837.3 486.1h3.0v1.5h-3.0zM1841.3 486.1h1.0v1.5h-1.0zM1810.3 488.1h1.0v1.5h-1.0zM1816.3 488.1h1.0v1.5h-1.0zM1818.3 488.1h2.0v1.5h-2.0zM1821.3 488.1h2.0v1.5h-2.0zM1824.3 488.1h1.0v1.5h-1.0zM1814.3 490.1h1.0v1.5h-1.0zM1825.3 490.1h1.0v1.5h-1.0zM1832.3 490.1h1.0v1.5h-1.0zM1834.3 490.1h2.0v1.5h-2.0zM1837.3 490.1h2.0v1.5h-2.0zM1814.3 492.1h1.0v1.5h-1.0zM1823.3 492.1h1.0v1.5h-1.0zM1826.3 492.1h1.0v1.5h-1.0zM1838.3 492.1h1.0v1.5h-1.0zM1842.3 492.1h1.0v1.5h-1.0zM1854.3 492.1h1.0v1.5h-1.0zM1867.3 492.1h1.0v1.5h-1.0zM1870.3 492.1h1.0v1.5h-1.0zM1883.3 492.1h1.0v1.5h-1.0zM1886.3 492.1h2.0v1.5h-2.0zM1807.3 494.1h1.0v1.5h-1.0zM1803.3 496.1h1.0v1.5h-1.0zM1799.3 498.1h1.0v1.5h-1.0zM1802.3 504.1h1.0v1.5h-1.0zM1815.3 504.1h1.0v1.5h-1.0zM1817.3 504.1h1.0v1.5h-1.0zM1806.3 506.1h1.0v1.5h-1.0zM1817.3 506.1h1.0v1.5h-1.0zM1831.3 506.1h1.0v1.5h-1.0zM1807.3 508.1h1.0v1.5h-1.0zM1814.3 508.1h1.0v1.5h-1.0zM1817.3 508.1h1.0v1.5h-1.0zM1821.3 508.1h1.0v1.5h-1.0zM1835.3 508.1h1.0v1.5h-1.0zM1842.3 508.1h1.0v1.5h-1.0zM1845.3 508.1h3.0v1.5h-3.0zM1849.3 508.1h1.0v1.5h-1.0zM1811.3 510.1h1.0v1.5h-1.0zM1818.3 510.1h1.0v1.5h-1.0zM1821.3 510.1h1.0v1.5h-1.0zM1825.3 510.1h1.0v1.5h-1.0zM1839.3 510.1h1.0v1.5h-1.0zM1841.3 510.1h2.0v1.5h-2.0zM1849.3 510.1h1.0v1.5h-1.0zM1852.3 510.1h3.0v1.5h-3.0zM1856.3 510.1h1.0v1.5h-1.0zM1814.3 512.1h1.0v1.5h-1.0zM1827.3 512.1h1.0v1.5h-1.0zM1829.3 512.1h2.0v1.5h-2.0zM1832.3 512.1h2.0v1.5h-2.0zM1835.3 512.1h1.0v1.5h-1.0zM1818.3 514.1h1.0v1.5h-1.0zM1827.3 514.1h1.0v1.5h-1.0zM1819.3 516.1h1.0v1.5h-1.0zM1829.3 516.1h1.0v1.5h-1.0zM1832.3 516.1h1.0v1.5h-1.0zM1834.3 516.1h1.0v1.5h-1.0zM1846.3 516.1h1.0v1.5h-1.0zM1819.3 518.1h1.0v1.5h-1.0zM1829.3 518.1h1.0v1.5h-1.0zM1832.3 518.1h1.0v1.5h-1.0zM1834.3 518.1h1.0v1.5h-1.0zM1846.3 518.1h1.0v1.5h-1.0zM1830.3 520.1h1.0v1.5h-1.0zM1833.3 520.1h1.0v1.5h-1.0zM1830.3 522.1h1.0v1.5h-1.0zM1815.3 524.1h2.0v1.5h-2.0zM1811.3 526.1h1.0v1.5h-1.0zM1807.3 528.1h1.0v1.5h-1.0zM1803.3 530.1h1.0v1.5h-1.0zM1799.3 532.1h1.0v1.5h-1.0zM1795.3 534.1h1.0v1.5h-1.0zM1814.3 540.1h2.0v1.5h-2.0zM1817.3 540.1h1.0v1.5h-1.0zM1802.3 542.1h1.0v1.5h-1.0zM1811.3 542.1h1.0v1.5h-1.0zM1819.3 542.1h1.0v1.5h-1.0zM1807.3 546.1h3.0v1.5h-3.0zM1802.3 548.1h1.0v1.5h-1.0zM1812.3 548.1h3.0v1.5h-3.0zM1816.3 548.1h1.0v1.5h-1.0zM1811.3 550.1h3.0v1.5h-3.0zM1808.3 552.1h3.0v1.5h-3.0zM1813.3 554.1h3.0v1.5h-3.0zM1814.3 556.1h3.0v1.5h-3.0zM1806.3 558.1h1.0v1.5h-1.0zM1816.3 558.1h3.0v1.5h-3.0zM1820.3 558.1h1.0v1.5h-1.0zM1820.3 562.1h1.0v1.5h-1.0zM1829.3 562.1h2.0v1.5h-2.0zM1812.3 564.1h1.0v1.5h-1.0zM1847.3 564.1h2.0v1.5h-2.0zM1813.3 566.1h1.0v1.5h-1.0zM1803.3 568.1h1.0v1.5h-1.0zM1799.3 570.1h1.0v1.5h-1.0zM1803.3 572.1h3.0v1.5h-3.0zM1795.3 574.1h1.0v1.5h-1.0zM1803.3 580.1h1.0v1.5h-1.0zM1820.3 580.1h1.0v1.5h-1.0zM1830.3 580.1h1.0v1.5h-1.0zM1832.3 580.1h1.0v1.5h-1.0zM1834.3 580.1h1.0v1.5h-1.0zM1836.3 580.1h2.0v1.5h-2.0zM1839.3 580.1h1.0v1.5h-1.0zM1802.3 582.1h1.0v1.5h-1.0zM1811.3 582.1h1.0v1.5h-1.0zM1819.3 582.1h1.0v1.5h-1.0zM1806.3 586.1h1.0v1.5h-1.0zM1808.3 586.1h1.0v1.5h-1.0zM1812.3 586.1h1.0v1.5h-1.0zM1814.3 586.1h1.0v1.5h-1.0zM1819.3 588.1h1.0v1.5h-1.0zM1815.3 590.1h3.0v1.5h-3.0zM1810.3 592.1h1.0v1.5h-1.0zM1820.3 592.1h3.0v1.5h-3.0zM1832.3 592.1h3.0v1.5h-3.0zM1812.3 594.1h1.0v1.5h-1.0zM1820.3 596.1h1.0v1.5h-1.0zM1815.3 598.1h3.0v1.5h-3.0zM1810.3 600.1h1.0v1.5h-1.0zM1820.3 600.1h3.0v1.5h-3.0zM1832.3 600.1h3.0v1.5h-3.0zM1812.3 602.1h1.0v1.5h-1.0zM1819.3 604.1h1.0v1.5h-1.0zM1815.3 606.1h3.0v1.5h-3.0zM1810.3 608.1h1.0v1.5h-1.0zM1820.3 608.1h3.0v1.5h-3.0zM1824.3 608.1h1.0v1.5h-1.0zM1819.3 610.1h3.0v1.5h-3.0zM1816.3 612.1h3.0v1.5h-3.0zM1821.3 614.1h3.0v1.5h-3.0zM1822.3 616.1h3.0v1.5h-3.0zM1807.3 618.1h1.0v1.5h-1.0zM1812.3 620.1h1.0v1.5h-1.0zM1817.3 622.1h1.0v1.5h-1.0zM1827.3 624.1h1.0v1.5h-1.0zM1841.3 624.1h1.0v1.5h-1.0zM1820.3 626.1h1.0v1.5h-1.0zM1835.3 626.1h1.0v1.5h-1.0zM1837.3 626.1h2.0v1.5h-2.0zM1842.3 626.1h2.0v1.5h-2.0zM1845.3 626.1h1.0v1.5h-1.0zM1848.3 626.1h1.0v1.5h-1.0zM1850.3 626.1h2.0v1.5h-2.0zM1824.3 628.1h1.0v1.5h-1.0zM1828.3 628.1h1.0v1.5h-1.0zM1833.3 628.1h2.0v1.5h-2.0zM1839.3 628.1h1.0v1.5h-1.0zM1841.3 628.1h3.0v1.5h-3.0zM1851.3 628.1h2.0v1.5h-2.0zM1807.3 630.1h2.0v1.5h-2.0zM1810.3 632.1h1.0v1.5h-1.0zM1820.3 632.1h3.0v1.5h-3.0zM1837.3 632.1h1.0v1.5h-1.0zM1852.3 632.1h1.0v1.5h-1.0zM1812.3 634.1h1.0v1.5h-1.0zM1799.3 636.1h1.0v1.5h-1.0zM1803.3 638.1h3.0v1.5h-3.0zM1795.3 640.1h3.0v1.5h-3.0zM1813.3 646.1h2.0v1.5h-2.0zM1816.3 646.1h1.0v1.5h-1.0zM1802.3 648.1h1.0v1.5h-1.0zM1811.3 648.1h1.0v1.5h-1.0zM1826.3 648.1h1.0v1.5h-1.0zM1835.3 648.1h2.0v1.5h-2.0zM1805.3 650.1h1.0v1.5h-1.0zM1812.3 650.1h1.0v1.5h-1.0zM1825.3 650.1h2.0v1.5h-2.0zM1831.3 650.1h3.0v1.5h-3.0zM1837.3 650.1h3.0v1.5h-3.0zM1841.3 650.1h2.0v1.5h-2.0zM1849.3 650.1h1.0v1.5h-1.0zM1861.3 650.1h2.0v1.5h-2.0zM1867.3 650.1h1.0v1.5h-1.0zM1869.3 650.1h3.0v1.5h-3.0zM1805.3 652.1h1.0v1.5h-1.0zM1808.3 652.1h1.0v1.5h-1.0zM1807.3 654.1h1.0v1.5h-1.0zM1822.3 654.1h1.0v1.5h-1.0zM1830.3 654.1h2.0v1.5h-2.0zM1844.3 654.1h1.0v1.5h-1.0zM1857.3 654.1h1.0v1.5h-1.0zM1808.3 656.1h1.0v1.5h-1.0zM1815.3 656.1h1.0v1.5h-1.0zM1810.3 658.1h3.0v1.5h-3.0zM1808.3 660.1h1.0v1.5h-1.0zM1821.3 660.1h1.0v1.5h-1.0zM1832.3 660.1h1.0v1.5h-1.0zM1838.3 660.1h2.0v1.5h-2.0zM1795.3 662.1h1.0v1.5h-1.0zM1815.3 668.1h2.0v1.5h-2.0zM1818.3 668.1h1.0v1.5h-1.0zM1808.3 670.1h1.0v1.5h-1.0zM1810.3 670.1h1.0v1.5h-1.0zM1819.3 670.1h1.0v1.5h-1.0zM1802.3 672.1h1.0v1.5h-1.0zM1811.3 672.1h1.0v1.5h-1.0zM1813.3 672.1h1.0v1.5h-1.0zM1806.3 674.1h1.0v1.5h-1.0zM1817.3 674.1h1.0v1.5h-1.0zM1839.3 674.1h1.0v1.5h-1.0zM1806.3 676.1h1.0v1.5h-1.0zM1815.3 676.1h1.0v1.5h-1.0zM1817.3 676.1h1.0v1.5h-1.0zM1820.3 676.1h1.0v1.5h-1.0zM1828.3 676.1h1.0v1.5h-1.0zM1834.3 676.1h1.0v1.5h-1.0zM1842.3 676.1h1.0v1.5h-1.0zM1849.3 676.1h2.0v1.5h-2.0zM1806.3 678.1h1.0v1.5h-1.0zM1817.3 678.1h1.0v1.5h-1.0zM1826.3 678.1h1.0v1.5h-1.0zM1806.3 680.1h1.0v1.5h-1.0zM1812.3 680.1h1.0v1.5h-1.0zM1826.3 680.1h1.0v1.5h-1.0zM1806.3 682.1h1.0v1.5h-1.0zM1817.3 682.1h1.0v1.5h-1.0zM1827.3 682.1h1.0v1.5h-1.0zM1806.3 684.1h1.0v1.5h-1.0zM1815.3 684.1h1.0v1.5h-1.0zM1823.3 684.1h1.0v1.5h-1.0zM1831.3 684.1h1.0v1.5h-1.0zM1838.3 684.1h1.0v1.5h-1.0zM1841.3 684.1h1.0v1.5h-1.0zM1849.3 684.1h1.0v1.5h-1.0zM1857.3 684.1h1.0v1.5h-1.0zM1860.3 684.1h2.0v1.5h-2.0zM1799.3 686.1h1.0v1.5h-1.0zM1806.3 686.1h1.0v1.5h-1.0zM1807.3 688.1h3.0v1.5h-3.0zM1799.3 690.1h1.0v1.5h-1.0zM1795.3 692.1h1.0v1.5h-1.0z"/><path fill="#ce9178" d="M1798.3 140.1h4.0v1.5h-4.0zM1805.3 146.1h7.0v1.5h-7.0zM1802.3 148.1h10.0v1.5h-10.0zM1821.3 148.1h20.0v1.5h-20.0zM1842.3 148.1h18.0v1.5h-18.0zM1817.3 156.1h8.0v1.5h-8.0zM1808.3 158.1h4.0v1.5h-4.0zM1815.3 160.1h6.0v1.5h-6.0zM1812.3 162.1h6.0v1.5h-6.0zM1812.3 164.1h5.0v1.5h-5.0zM1819.3 164.1h10.0v1.5h-10.0zM1811.3 180.1h5.0v1.5h-5.0zM1817.3 180.1h5.0v1.5h-5.0zM1817.3 182.1h5.0v1.5h-5.0zM1807.3 214.1h7.0v1.5h-7.0zM1817.3 216.1h8.0v1.5h-8.0zM1806.3 218.1h5.0v1.5h-5.0zM1807.3 220.1h4.0v1.5h-4.0zM1817.3 230.1h8.0v1.5h-8.0zM1799.3 244.1h7.0v1.5h-7.0zM1799.3 246.1h16.0v1.5h-16.0zM1806.3 248.1h12.0v1.5h-12.0zM1825.3 248.1h5.0v1.5h-5.0zM1838.3 248.1h5.0v1.5h-5.0zM1799.3 252.1h10.0v1.5h-10.0zM1806.3 254.1h9.0v1.5h-9.0zM1819.3 254.1h6.0v1.5h-6.0zM1813.3 256.1h13.0v1.5h-13.0zM1830.3 256.1h9.0v1.5h-9.0zM1852.3 256.1h20.0v1.5h-20.0zM1886.3 256.1h13.0v1.5h-13.0zM1813.3 258.1h13.0v1.5h-13.0zM1830.3 258.1h11.0v1.5h-11.0zM1854.3 258.1h22.0v1.5h-22.0zM1890.3 258.1h9.0v1.5h-9.0zM1813.3 260.1h13.0v1.5h-13.0zM1830.3 260.1h10.0v1.5h-10.0zM1853.3 260.1h21.0v1.5h-21.0zM1888.3 260.1h11.0v1.5h-11.0zM1813.3 262.1h6.0v1.5h-6.0zM1823.3 262.1h9.0v1.5h-9.0zM1839.3 262.1h9.0v1.5h-9.0zM1849.3 262.1h6.0v1.5h-6.0zM1868.3 262.1h20.0v1.5h-20.0zM1813.3 264.1h13.0v1.5h-13.0zM1830.3 264.1h9.0v1.5h-9.0zM1852.3 264.1h20.0v1.5h-20.0zM1886.3 264.1h13.0v1.5h-13.0zM1806.3 266.1h9.0v1.5h-9.0zM1819.3 266.1h6.0v1.5h-6.0zM1813.3 268.1h13.0v1.5h-13.0zM1830.3 268.1h9.0v1.5h-9.0zM1852.3 268.1h20.0v1.5h-20.0zM1886.3 268.1h13.0v1.5h-13.0zM1813.3 270.1h13.0v1.5h-13.0zM1830.3 270.1h11.0v1.5h-11.0zM1854.3 270.1h22.0v1.5h-22.0zM1890.3 270.1h9.0v1.5h-9.0zM1813.3 272.1h13.0v1.5h-13.0zM1830.3 272.1h10.0v1.5h-10.0zM1853.3 272.1h21.0v1.5h-21.0zM1888.3 272.1h11.0v1.5h-11.0zM1813.3 274.1h6.0v1.5h-6.0zM1823.3 274.1h9.0v1.5h-9.0zM1839.3 274.1h9.0v1.5h-9.0zM1849.3 274.1h6.0v1.5h-6.0zM1868.3 274.1h20.0v1.5h-20.0zM1813.3 276.1h13.0v1.5h-13.0zM1830.3 276.1h10.0v1.5h-10.0zM1849.3 276.1h15.0v1.5h-15.0zM1878.3 276.1h15.0v1.5h-15.0zM1834.3 284.1h12.0v1.5h-12.0zM1825.3 286.1h4.0v1.5h-4.0zM1799.3 328.1h9.0v1.5h-9.0zM1799.3 330.1h9.0v1.5h-9.0zM1799.3 332.1h9.0v1.5h-9.0zM1799.3 334.1h9.0v1.5h-9.0zM1799.3 336.1h9.0v1.5h-9.0zM1799.3 338.1h9.0v1.5h-9.0zM1799.3 340.1h9.0v1.5h-9.0zM1814.3 354.1h2.0v1.5h-2.0zM1827.3 466.1h7.0v1.5h-7.0zM1850.3 466.1h8.0v1.5h-8.0zM1859.3 466.1h9.0v1.5h-9.0zM1813.3 564.1h24.0v1.5h-24.0zM1838.3 564.1h9.0v1.5h-9.0zM1821.3 580.1h9.0v1.5h-9.0zM1808.3 588.1h11.0v1.5h-11.0zM1808.3 596.1h12.0v1.5h-12.0zM1808.3 604.1h11.0v1.5h-11.0zM1808.3 622.1h9.0v1.5h-9.0zM1823.3 654.1h7.0v1.5h-7.0zM1846.3 654.1h8.0v1.5h-8.0zM1855.3 654.1h2.0v1.5h-2.0zM1819.3 674.1h8.0v1.5h-8.0zM1828.3 674.1h2.0v1.5h-2.0zM1831.3 674.1h2.0v1.5h-2.0zM1834.3 674.1h5.0v1.5h-5.0zM1819.3 678.1h7.0v1.5h-7.0zM1814.3 680.1h5.0v1.5h-5.0zM1820.3 680.1h6.0v1.5h-6.0zM1819.3 682.1h8.0v1.5h-8.0zM1816.3 684.1h7.0v1.5h-7.0z"/><path fill="#d7ba7d" d="M1795.3 154.1h4.0v1.5h-4.0zM1795.3 170.1h15.0v1.5h-15.0zM1795.3 178.1h11.0v1.5h-11.0zM1795.3 188.1h6.0v1.5h-6.0zM1795.3 198.1h9.0v1.5h-9.0zM1795.3 206.1h6.0v1.5h-6.0zM1795.3 228.1h12.0v1.5h-12.0z"/><path fill="#b5cea8" d="M1811.3 172.1h4.0v1.5h-4.0zM1807.3 180.1h3.0v1.5h-3.0zM1810.3 190.1h4.0v1.5h-4.0zM1807.3 192.1h4.0v1.5h-4.0zM1812.3 192.1h1.0v1.5h-1.0zM1811.3 200.1h4.0v1.5h-4.0zM1808.3 208.1h4.0v1.5h-4.0zM1813.3 208.1h4.0v1.5h-4.0zM1810.3 210.1h4.0v1.5h-4.0zM1807.3 212.1h1.0v1.5h-1.0zM1809.3 212.1h4.0v1.5h-4.0zM1814.3 222.1h3.0v1.5h-3.0zM1814.3 288.1h2.0v1.5h-2.0zM1815.3 290.1h2.0v1.5h-2.0zM1816.3 292.1h2.0v1.5h-2.0zM1807.3 294.1h1.0v1.5h-1.0zM1801.3 306.1h1.0v1.5h-1.0zM1804.3 306.1h1.0v1.5h-1.0zM1807.3 306.1h1.0v1.5h-1.0zM1810.3 306.1h1.0v1.5h-1.0zM1801.3 308.1h1.0v1.5h-1.0zM1804.3 308.1h1.0v1.5h-1.0zM1809.3 308.1h1.0v1.5h-1.0zM1812.3 308.1h1.0v1.5h-1.0zM1801.3 310.1h1.0v1.5h-1.0zM1804.3 310.1h1.0v1.5h-1.0zM1807.3 310.1h1.0v1.5h-1.0zM1812.3 310.1h1.0v1.5h-1.0zM1815.3 310.1h1.0v1.5h-1.0zM1818.3 310.1h1.0v1.5h-1.0zM1801.3 312.1h1.0v1.5h-1.0zM1804.3 312.1h1.0v1.5h-1.0zM1807.3 312.1h1.0v1.5h-1.0zM1812.3 312.1h1.0v1.5h-1.0zM1815.3 312.1h1.0v1.5h-1.0zM1818.3 312.1h1.0v1.5h-1.0zM1801.3 314.1h1.0v1.5h-1.0zM1804.3 314.1h1.0v1.5h-1.0zM1807.3 314.1h1.0v1.5h-1.0zM1812.3 314.1h1.0v1.5h-1.0zM1815.3 314.1h1.0v1.5h-1.0zM1818.3 314.1h1.0v1.5h-1.0zM1801.3 316.1h1.0v1.5h-1.0zM1804.3 316.1h1.0v1.5h-1.0zM1807.3 316.1h1.0v1.5h-1.0zM1812.3 316.1h1.0v1.5h-1.0zM1815.3 316.1h1.0v1.5h-1.0zM1818.3 316.1h1.0v1.5h-1.0zM1801.3 318.1h1.0v1.5h-1.0zM1804.3 318.1h1.0v1.5h-1.0zM1807.3 318.1h1.0v1.5h-1.0zM1812.3 318.1h1.0v1.5h-1.0zM1815.3 318.1h1.0v1.5h-1.0zM1818.3 318.1h1.0v1.5h-1.0zM1868.3 346.1h1.0v1.5h-1.0zM1810.3 350.1h1.0v1.5h-1.0zM1810.3 352.1h1.0v1.5h-1.0zM1835.3 368.1h1.0v1.5h-1.0zM1864.3 368.1h1.0v1.5h-1.0zM1876.3 368.1h1.0v1.5h-1.0zM1810.3 370.1h1.0v1.5h-1.0zM1812.3 380.1h1.0v1.5h-1.0zM1816.3 382.1h1.0v1.5h-1.0zM1824.3 390.1h1.0v1.5h-1.0zM1826.3 394.1h1.0v1.5h-1.0zM1812.3 416.1h1.0v1.5h-1.0zM1816.3 418.1h1.0v1.5h-1.0zM1825.3 424.1h1.0v1.5h-1.0zM1818.3 444.1h1.0v1.5h-1.0zM1827.3 446.1h1.0v1.5h-1.0zM1835.3 446.1h1.0v1.5h-1.0zM1839.3 448.1h1.0v1.5h-1.0zM1823.3 450.1h1.0v1.5h-1.0zM1845.3 452.1h1.0v1.5h-1.0zM1818.3 462.1h1.0v1.5h-1.0zM1827.3 464.1h3.0v1.5h-3.0zM1813.3 478.1h1.0v1.5h-1.0zM1816.3 478.1h1.0v1.5h-1.0zM1812.3 484.1h1.0v1.5h-1.0zM1816.3 486.1h1.0v1.5h-1.0zM1869.3 492.1h1.0v1.5h-1.0zM1885.3 492.1h1.0v1.5h-1.0zM1816.3 508.1h1.0v1.5h-1.0zM1820.3 510.1h1.0v1.5h-1.0zM1832.3 520.1h1.0v1.5h-1.0zM1832.3 522.1h1.0v1.5h-1.0zM1836.3 626.1h1.0v1.5h-1.0zM1868.3 650.1h1.0v1.5h-1.0zM1807.3 652.1h1.0v1.5h-1.0zM1834.3 660.1h4.0v1.5h-4.0zM1816.3 676.1h1.0v1.5h-1.0zM1819.3 676.1h1.0v1.5h-1.0zM1840.3 684.1h1.0v1.5h-1.0zM1859.3 684.1h1.0v1.5h-1.0z"/><path fill="#4ec9b0" d="M1810.3 284.1h8.0v1.5h-8.0zM1807.3 346.1h5.0v1.5h-5.0zM1844.3 346.1h5.0v1.5h-5.0zM1818.3 362.1h4.0v1.5h-4.0zM1829.3 362.1h4.0v1.5h-4.0zM1810.3 368.1h4.0v1.5h-4.0zM1840.3 368.1h4.0v1.5h-4.0zM1821.3 452.1h5.0v1.5h-5.0zM1803.3 466.1h8.0v1.5h-8.0zM1795.3 580.1h8.0v1.5h-8.0zM1807.3 650.1h5.0v1.5h-5.0zM1844.3 650.1h5.0v1.5h-5.0zM1799.3 654.1h8.0v1.5h-8.0z"/><path fill="#dcdcaa" d="M1819.3 284.1h14.0v1.5h-14.0zM1814.3 286.1h10.0v1.5h-10.0zM1827.3 346.1h4.0v1.5h-4.0zM1834.3 346.1h3.0v1.5h-3.0zM1863.3 346.1h4.0v1.5h-4.0zM1804.3 360.1h11.0v1.5h-11.0zM1823.3 362.1h5.0v1.5h-5.0zM1834.3 362.1h6.0v1.5h-6.0zM1815.3 368.1h5.0v1.5h-5.0zM1845.3 368.1h5.0v1.5h-5.0zM1804.3 378.1h9.0v1.5h-9.0zM1804.3 414.1h5.0v1.5h-5.0zM1804.3 442.1h10.0v1.5h-10.0zM1816.3 448.1h5.0v1.5h-5.0zM1813.3 450.1h6.0v1.5h-6.0zM1813.3 452.1h7.0v1.5h-7.0zM1840.3 452.1h4.0v1.5h-4.0zM1812.3 466.1h14.0v1.5h-14.0zM1804.3 476.1h4.0v1.5h-4.0zM1803.3 478.1h9.0v1.5h-9.0zM1815.3 492.1h8.0v1.5h-8.0zM1819.3 514.1h8.0v1.5h-8.0zM1804.3 540.1h10.0v1.5h-10.0zM1803.3 548.1h9.0v1.5h-9.0zM1803.3 552.1h5.0v1.5h-5.0zM1803.3 554.1h10.0v1.5h-10.0zM1803.3 556.1h11.0v1.5h-11.0zM1807.3 558.1h9.0v1.5h-9.0zM1807.3 562.1h13.0v1.5h-13.0zM1807.3 564.1h5.0v1.5h-5.0zM1799.3 572.1h4.0v1.5h-4.0zM1804.3 580.1h16.0v1.5h-16.0zM1811.3 592.1h9.0v1.5h-9.0zM1811.3 600.1h9.0v1.5h-9.0zM1811.3 608.1h9.0v1.5h-9.0zM1811.3 612.1h5.0v1.5h-5.0zM1811.3 614.1h10.0v1.5h-10.0zM1811.3 616.1h11.0v1.5h-11.0zM1839.3 626.1h3.0v1.5h-3.0zM1825.3 628.1h3.0v1.5h-3.0zM1844.3 628.1h7.0v1.5h-7.0zM1811.3 632.1h9.0v1.5h-9.0zM1799.3 638.1h4.0v1.5h-4.0zM1804.3 646.1h9.0v1.5h-9.0zM1813.3 648.1h13.0v1.5h-13.0zM1827.3 650.1h4.0v1.5h-4.0zM1834.3 650.1h3.0v1.5h-3.0zM1863.3 650.1h4.0v1.5h-4.0zM1808.3 654.1h14.0v1.5h-14.0zM1799.3 658.1h11.0v1.5h-11.0zM1810.3 660.1h11.0v1.5h-11.0zM1804.3 668.1h11.0v1.5h-11.0zM1807.3 676.1h8.0v1.5h-8.0zM1807.3 684.1h8.0v1.5h-8.0zM1803.3 688.1h4.0v1.5h-4.0z"/><path fill="#4fc1ff" d="M1801.3 288.1h10.0v1.5h-10.0zM1801.3 290.1h11.0v1.5h-11.0zM1801.3 292.1h12.0v1.5h-12.0zM1801.3 304.1h6.0v1.5h-6.0zM1801.3 326.1h6.0v1.5h-6.0zM1813.3 346.1h12.0v1.5h-12.0zM1850.3 346.1h11.0v1.5h-11.0zM1845.3 362.1h6.0v1.5h-6.0zM1814.3 364.1h6.0v1.5h-6.0zM1814.3 366.1h6.0v1.5h-6.0zM1821.3 368.1h11.0v1.5h-11.0zM1839.3 390.1h11.0v1.5h-11.0zM1825.3 392.1h12.0v1.5h-12.0zM1812.3 446.1h12.0v1.5h-12.0zM1827.3 452.1h11.0v1.5h-11.0zM1819.3 484.1h12.0v1.5h-12.0zM1823.3 486.1h11.0v1.5h-11.0zM1828.3 492.1h10.0v1.5h-10.0zM1844.3 492.1h10.0v1.5h-10.0zM1856.3 492.1h10.0v1.5h-10.0zM1872.3 492.1h10.0v1.5h-10.0zM1836.3 516.1h10.0v1.5h-10.0zM1836.3 518.1h10.0v1.5h-10.0zM1819.3 520.1h10.0v1.5h-10.0zM1819.3 522.1h10.0v1.5h-10.0zM1813.3 650.1h12.0v1.5h-12.0zM1850.3 650.1h11.0v1.5h-11.0z"/><path fill="#6a9955" d="M1795.3 302.1h2.0v1.5h-2.0zM1798.3 302.1h16.0v1.5h-16.0zM1795.3 324.1h2.0v1.5h-2.0zM1798.3 324.1h8.0v1.5h-8.0zM1810.3 328.1h2.0v1.5h-2.0zM1813.3 328.1h1.0v1.5h-1.0zM1810.3 330.1h2.0v1.5h-2.0zM1813.3 330.1h1.0v1.5h-1.0zM1810.3 332.1h2.0v1.5h-2.0zM1813.3 332.1h1.0v1.5h-1.0zM1810.3 334.1h2.0v1.5h-2.0zM1813.3 334.1h1.0v1.5h-1.0zM1810.3 336.1h2.0v1.5h-2.0zM1813.3 336.1h1.0v1.5h-1.0zM1810.3 338.1h2.0v1.5h-2.0zM1813.3 338.1h1.0v1.5h-1.0zM1810.3 340.1h2.0v1.5h-2.0zM1813.3 340.1h1.0v1.5h-1.0zM1795.3 358.1h2.0v1.5h-2.0zM1798.3 358.1h26.0v1.5h-26.0zM1795.3 376.1h2.0v1.5h-2.0zM1798.3 376.1h8.0v1.5h-8.0zM1795.3 412.1h2.0v1.5h-2.0zM1798.3 412.1h20.0v1.5h-20.0zM1795.3 440.1h2.0v1.5h-2.0zM1798.3 440.1h12.0v1.5h-12.0zM1795.3 474.1h2.0v1.5h-2.0zM1798.3 474.1h4.0v1.5h-4.0zM1799.3 482.1h2.0v1.5h-2.0zM1802.3 482.1h12.0v1.5h-12.0zM1799.3 502.1h2.0v1.5h-2.0zM1802.3 502.1h22.0v1.5h-22.0zM1795.3 538.1h2.0v1.5h-2.0zM1798.3 538.1h6.0v1.5h-6.0zM1805.3 538.1h6.0v1.5h-6.0zM1807.3 560.1h2.0v1.5h-2.0zM1810.3 560.1h14.0v1.5h-14.0zM1795.3 578.1h2.0v1.5h-2.0zM1798.3 578.1h14.0v1.5h-14.0zM1795.3 644.1h2.0v1.5h-2.0zM1798.3 644.1h10.0v1.5h-10.0zM1795.3 666.1h2.0v1.5h-2.0zM1798.3 666.1h8.0v1.5h-8.0z"/><path fill="#c586c0" d="M1799.3 380.1h3.0v1.5h-3.0zM1803.3 382.1h3.0v1.5h-3.0zM1807.3 384.1h2.0v1.5h-2.0zM1811.3 390.1h2.0v1.5h-2.0zM1815.3 396.1h6.0v1.5h-6.0zM1799.3 406.1h6.0v1.5h-6.0zM1799.3 416.1h3.0v1.5h-3.0zM1803.3 418.1h3.0v1.5h-3.0zM1807.3 420.1h2.0v1.5h-2.0zM1811.3 424.1h2.0v1.5h-2.0zM1799.3 446.1h3.0v1.5h-3.0zM1803.3 448.1h2.0v1.5h-2.0zM1799.3 462.1h2.0v1.5h-2.0zM1799.3 484.1h3.0v1.5h-3.0zM1803.3 486.1h3.0v1.5h-3.0zM1807.3 488.1h2.0v1.5h-2.0zM1799.3 504.1h2.0v1.5h-2.0zM1803.3 508.1h3.0v1.5h-3.0zM1807.3 510.1h3.0v1.5h-3.0zM1811.3 512.1h2.0v1.5h-2.0zM1799.3 542.1h2.0v1.5h-2.0zM1813.3 542.1h6.0v1.5h-6.0zM1799.3 548.1h2.0v1.5h-2.0zM1803.3 558.1h2.0v1.5h-2.0zM1807.3 566.1h6.0v1.5h-6.0zM1799.3 582.1h2.0v1.5h-2.0zM1813.3 582.1h6.0v1.5h-6.0zM1799.3 586.1h6.0v1.5h-6.0zM1803.3 588.1h4.0v1.5h-4.0zM1807.3 592.1h2.0v1.5h-2.0zM1807.3 594.1h5.0v1.5h-5.0zM1803.3 596.1h4.0v1.5h-4.0zM1807.3 600.1h2.0v1.5h-2.0zM1807.3 602.1h5.0v1.5h-5.0zM1803.3 604.1h4.0v1.5h-4.0zM1807.3 608.1h2.0v1.5h-2.0zM1807.3 620.1h5.0v1.5h-5.0zM1803.3 622.1h4.0v1.5h-4.0zM1807.3 632.1h2.0v1.5h-2.0zM1807.3 634.1h5.0v1.5h-5.0zM1799.3 648.1h2.0v1.5h-2.0zM1799.3 672.1h2.0v1.5h-2.0zM1801.3 686.1h4.0v1.5h-4.0z"/></g></svg>
</body></html>
